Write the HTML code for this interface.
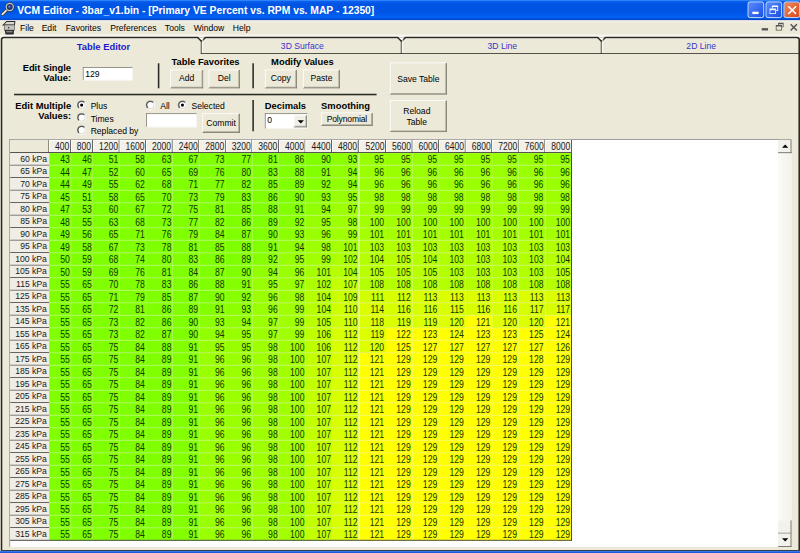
<!DOCTYPE html><html><head><meta charset="utf-8"><style>
*{margin:0;padding:0;box-sizing:border-box}
html,body{width:800px;height:553px;overflow:hidden;background:#ece9d8}
#w{position:absolute;left:0;top:0;width:1024px;height:708px;transform:scale(0.78125);transform-origin:0 0;background:#ece9d8;font-family:"Liberation Sans",sans-serif;font-size:11px;color:#000;overflow:hidden}
.a{position:absolute}
.t{position:absolute;white-space:nowrap;line-height:13px}
.b{font-weight:bold;font-size:12px}
.btn{position:absolute;background:#ece9d8;border-top:1px solid #fff;border-left:1px solid #fff;border-right:1px solid #716f64;border-bottom:1px solid #716f64;box-shadow:inset -1px -1px 0 #aca899;text-align:center}
.etchv{position:absolute;width:2px;background:#2b2b25}
.sb{position:absolute;background:#f2f1eb;border-right:1px solid #5a5a50;border-bottom:1px solid #5a5a50}
.cell{position:absolute;text-align:right;padding-right:1px;line-height:16px;height:16px}
.rh{font-size:12px;line-height:14.5px;color:#202020}
.rh span{display:inline-block;transform:scaleX(.92);transform-origin:100% 50%}
.ch{background:#f1efe6;border-right:1.2px solid #35352e;box-shadow:inset 1px 1px 0 #fff;font-size:13.5px;line-height:17px;color:#202020}
.ch span{display:inline-block;transform:scaleX(.81);transform-origin:100% 50%}
.d{font-size:13px;line-height:17.8px;color:#123600}
.d span{display:inline-block;transform:scaleX(.85);transform-origin:100% 50%}
</style></head><body><div id="w">
<div class="a" style="left:0;top:0;width:1024px;height:26px;background:linear-gradient(#3d95ff 0,#0a5eef 2px,#0054e3 5px,#0054e3 15px,#0062f5 22px,#0050e0 24px,#0040b8 26px)"></div>
<svg class="a" style="left:0;top:0" width="22" height="24" viewBox="0 0 22 24"><line x1="3" y1="18.5" x2="8.5" y2="13" stroke="#3a3a30" stroke-width="4" stroke-linecap="round"/><line x1="3" y1="18.5" x2="8.5" y2="13" stroke="#f0ecd8" stroke-width="2.2" stroke-linecap="round"/><circle cx="12.5" cy="9" r="5.6" fill="#23337a" stroke="#2a2a25" stroke-width="1"/><circle cx="12.5" cy="9" r="4.6" fill="none" stroke="#c8c8b8" stroke-width="1.6"/><circle cx="12" cy="8.5" r="1.5" fill="#5a7ad0"/></svg>
<div class="t b" style="left:22px;top:6px;color:#fff;font-size:13.2px;line-height:16px">VCM Editor - 3bar_v1.bin - [Primary VE Percent vs. RPM vs. MAP - 12350]</div>
<div class="a" style="left:957px;top:2px;width:21px;height:21px;border:1px solid #fff;border-radius:3px;background:linear-gradient(135deg,#5a8cff,#1a4fe0)"><div class="a" style="left:5px;top:12px;width:8px;height:3px;background:#fff"></div></div>
<div class="a" style="left:980px;top:2px;width:21px;height:21px;border:1px solid #fff;border-radius:3px;background:linear-gradient(135deg,#5a8cff,#1a4fe0)"><div class="a" style="left:7px;top:4px;width:8px;height:7px;border:1px solid #fff;border-top-width:2px"></div><div class="a" style="left:4px;top:8px;width:8px;height:7px;border:1px solid #fff;border-top-width:2px;background:#2a5ff0"></div></div>
<div class="a" style="left:1003px;top:2px;width:21px;height:21px;border:1px solid #fff;border-radius:3px;background:linear-gradient(135deg,#f08a5a,#d84a20)"><svg class="a" style="left:4px;top:4px" width="12" height="12"><path d="M1 1L11 11M11 1L1 11" stroke="#fff" stroke-width="2"/></svg></div>
<div class="a" style="left:0;top:26px;width:1024px;height:21px;background:linear-gradient(#f4f1ea,#ece9d8 4px,#ece9d8 17px,#fbfaf6 20px)"></div>
<svg class="a" style="left:0;top:26px" width="22" height="20" viewBox="0 0 22 20"><path d="M4 6L8.5 1.5H19L18.5 6Z" fill="#d8d8d0" stroke="#2a2a2a" stroke-width="1.3"/><rect x="5.5" y="6" width="13" height="6.5" fill="#c4c4c0" stroke="#555" stroke-width="0.8"/><circle cx="11" cy="9.5" r="0.9" fill="#222"/><path d="M6 12.5H18L17.5 18H7Z" fill="#2c2c2c"/><rect x="8" y="13.5" width="8" height="2" fill="#888"/></svg>
<div class="t" style="left:25.6px;top:29.5px">File</div>
<div class="t" style="left:53.3px;top:29.5px">Edit</div>
<div class="t" style="left:84.0px;top:29.5px">Favorites</div>
<div class="t" style="left:141.0px;top:29.5px">Preferences</div>
<div class="t" style="left:211.0px;top:29.5px">Tools</div>
<div class="t" style="left:248.0px;top:29.5px">Window</div>
<div class="t" style="left:298.0px;top:29.5px">Help</div>
<div class="a" style="left:975px;top:36px;width:8px;height:3px;background:#555"></div>
<div class="a" style="left:996px;top:29px;width:7px;height:6px;border:1px solid #555;border-top-width:2px"></div><div class="a" style="left:993px;top:32px;width:8px;height:7px;border:1px solid #555;border-top-width:2px;background:#ece9d8"></div>
<svg class="a" style="left:1011px;top:30px" width="10" height="10"><path d="M1 1L9 9M9 1L1 9" stroke="#555" stroke-width="2"/></svg>
<div class="a" style="left:1px;top:47px;width:1023px;height:659px;border:2px solid #2a2a22;border-radius:4px 4px 0 0;box-shadow:inset 1px 1px 0 #fff"></div>
<div class="t" style="left:4px;width:257px;text-align:center;top:54px;color:#1a1acc;font-weight:bold;font-size:12px">Table Editor</div>
<div class="a" style="left:257px;top:67.5px;width:257px;height:1.7px;background:#2a2a22"></div>
<div class="a" style="left:256.5px;top:49px;width:1.7px;height:20px;background:#2a2a22"></div>
<svg class="a" style="left:251.8px;top:45px" width="12" height="9"><rect x="2" y="0" width="8" height="3" fill="#f6f5f0"/><path d="M1 3L5.5 7.5L6.5 7.5L11 3" stroke="#2a2a22" stroke-width="1.7" fill="#fff"/></svg>
<div class="a" style="left:259px;top:49px;width:1px;height:18px;background:#fff"></div>
<div class="t" style="left:259px;width:256px;text-align:center;top:53px;color:#3434cc">3D Surface</div>
<div class="a" style="left:513px;top:67.5px;width:257px;height:1.7px;background:#2a2a22"></div>
<div class="a" style="left:512.5px;top:49px;width:1.7px;height:20px;background:#2a2a22"></div>
<svg class="a" style="left:507.8px;top:45px" width="12" height="9"><rect x="2" y="0" width="8" height="3" fill="#f6f5f0"/><path d="M1 3L5.5 7.5L6.5 7.5L11 3" stroke="#2a2a22" stroke-width="1.7" fill="#fff"/></svg>
<div class="a" style="left:515px;top:49px;width:1px;height:18px;background:#fff"></div>
<div class="t" style="left:515px;width:256px;text-align:center;top:53px;color:#3434cc">3D Line</div>
<div class="a" style="left:769px;top:67.5px;width:254px;height:1.7px;background:#2a2a22"></div>
<div class="a" style="left:768.5px;top:49px;width:1.7px;height:20px;background:#2a2a22"></div>
<svg class="a" style="left:763.8px;top:45px" width="12" height="9"><rect x="2" y="0" width="8" height="3" fill="#f6f5f0"/><path d="M1 3L5.5 7.5L6.5 7.5L11 3" stroke="#2a2a22" stroke-width="1.7" fill="#fff"/></svg>
<div class="a" style="left:771px;top:49px;width:1px;height:18px;background:#fff"></div>
<div class="t" style="left:771px;width:253px;text-align:center;top:53px;color:#3434cc">2D Line</div>
<div class="t b" style="right:933.0px;top:81.0px;text-align:right">Edit Single</div>
<div class="t b" style="right:933.0px;top:94.0px;text-align:right">Value:</div>
<div class="a" style="left:106px;top:85.5px;width:64px;height:17px;background:#fff;border-top:1.5px solid #7c7a6c;border-left:1.5px solid #7c7a6c;border-right:1px solid #f4f3ee;border-bottom:1px solid #f4f3ee"></div>
<div class="t" style="left:109.0px;top:89.0px">129</div>
<div class="etchv" style="left:202px;top:80.5px;height:32px"></div>
<div class="t b" style="left:219.5px;top:72.5px">Table Favorites</div>
<div class="btn" style="left:218px;top:89px;width:42px;height:24px;line-height:21px">Add</div>
<div class="btn" style="left:267px;top:89px;width:40px;height:24px;line-height:21px">Del</div>
<div class="etchv" style="left:322.5px;top:80.5px;height:32px"></div>
<div class="t b" style="left:347.0px;top:72.5px">Modify Values</div>
<div class="btn" style="left:339px;top:89px;width:41px;height:24px;line-height:21px">Copy</div>
<div class="btn" style="left:388px;top:89px;width:47px;height:24px;line-height:21px">Paste</div>
<div class="btn" style="left:499px;top:80px;width:73px;height:41px;line-height:40px">Save Table</div>
<div class="btn" style="left:499px;top:128px;width:73px;height:41px;line-height:13.6px;padding-top:7px;padding-right:4px">Reload<br>Table</div>
<div class="a" style="left:18px;top:119.5px;width:464px;height:2px;background:#2b2b25"></div>
<div class="t b" style="right:933.0px;top:129.0px;text-align:right">Edit Multiple</div>
<div class="t b" style="right:933.0px;top:142.0px;text-align:right">Values:</div>
<svg width="0" height="0" style="position:absolute"><defs><linearGradient id="rg" x1="0" y1="0" x2="1" y2="1"><stop offset=".45" stop-color="#808080"/><stop offset=".55" stop-color="#fff"/></linearGradient><linearGradient id="rg2" x1="0" y1="0" x2="1" y2="1"><stop offset=".45" stop-color="#404040"/><stop offset=".55" stop-color="#d4d0c8"/></linearGradient></defs></svg>
<svg class="a" style="left:98.2px;top:128.0px" width="13" height="13" viewBox="0 0 13 13"><circle cx="6.5" cy="6.5" r="6" fill="url(#rg)"/><circle cx="6.5" cy="6.5" r="5" fill="url(#rg2)"/><circle cx="6.5" cy="6.5" r="4" fill="#fff"/><circle cx="6.5" cy="6.5" r="2" fill="#000"/></svg>
<div class="t" style="left:116.0px;top:129.0px">Plus</div>
<svg class="a" style="left:98.2px;top:144.0px" width="13" height="13" viewBox="0 0 13 13"><circle cx="6.5" cy="6.5" r="6" fill="url(#rg)"/><circle cx="6.5" cy="6.5" r="5" fill="url(#rg2)"/><circle cx="6.5" cy="6.5" r="4" fill="#fff"/></svg>
<div class="t" style="left:116.0px;top:145.5px">Times</div>
<svg class="a" style="left:98.2px;top:160.0px" width="13" height="13" viewBox="0 0 13 13"><circle cx="6.5" cy="6.5" r="6" fill="url(#rg)"/><circle cx="6.5" cy="6.5" r="5" fill="url(#rg2)"/><circle cx="6.5" cy="6.5" r="4" fill="#fff"/></svg>
<div class="t" style="left:116.0px;top:161.5px">Replaced by</div>
<svg class="a" style="left:185.8px;top:128.0px" width="13" height="13" viewBox="0 0 13 13"><circle cx="6.5" cy="6.5" r="6" fill="url(#rg)"/><circle cx="6.5" cy="6.5" r="5" fill="url(#rg2)"/><circle cx="6.5" cy="6.5" r="4" fill="#fff"/></svg>
<div class="t" style="left:205.0px;top:129.0px">All</div>
<svg class="a" style="left:226.5px;top:128.0px" width="13" height="13" viewBox="0 0 13 13"><circle cx="6.5" cy="6.5" r="6" fill="url(#rg)"/><circle cx="6.5" cy="6.5" r="5" fill="url(#rg2)"/><circle cx="6.5" cy="6.5" r="4" fill="#fff"/><circle cx="6.5" cy="6.5" r="2" fill="#000"/></svg>
<div class="t" style="left:245.0px;top:129.0px">Selected</div>
<div class="a" style="left:187px;top:145px;width:65px;height:18px;background:#fff;border-top:1.5px solid #7c7a6c;border-left:1.5px solid #7c7a6c;border-right:1px solid #f4f3ee;border-bottom:1px solid #f4f3ee"></div>
<div class="btn" style="left:259px;top:145px;width:48px;height:25px;line-height:22px">Commit</div>
<div class="etchv" style="left:322.5px;top:128px;height:40px"></div>
<div class="t b" style="left:339.0px;top:129.5px">Decimals</div>
<div class="t b" style="left:411.0px;top:129.5px">Smoothing</div>
<div class="a" style="left:339px;top:145px;width:55px;height:20px;background:#fff;border-top:1.5px solid #7c7a6c;border-left:1.5px solid #7c7a6c;border-right:1px solid #f4f3ee;border-bottom:1px solid #f4f3ee"></div>
<div class="t" style="left:342.0px;top:148.0px">0</div>
<div class="btn" style="left:376px;top:147px;width:17px;height:16px;background:#f0efe8"><div class="a" style="left:3.5px;top:5.5px;width:0;height:0;border-left:4.5px solid transparent;border-right:4.5px solid transparent;border-top:4.5px solid #000"></div></div>
<div class="btn" style="left:411px;top:144px;width:66px;height:17px;line-height:14px;letter-spacing:-0.2px">Polynomial</div>
<div class="a" style="left:12px;top:178px;width:1001px;height:522px;background:#fff;border-top:1px solid #808080;border-left:1px solid #808080"></div>
<div class="a" style="left:13px;top:179px;width:50px;height:16px;background:#ece9d8;border-right:1px solid #45453c"></div>
<div class="cell ch" style="left:63.00px;top:179px;width:28.00px;"><span>400</span></div>
<div class="cell ch" style="left:91.00px;top:179px;width:28.00px;"><span>800</span></div>
<div class="cell ch" style="left:119.00px;top:179px;width:34.05px;"><span>1200</span></div>
<div class="cell ch" style="left:153.05px;top:179px;width:34.05px;"><span>1600</span></div>
<div class="cell ch" style="left:187.10px;top:179px;width:34.05px;"><span>2000</span></div>
<div class="cell ch" style="left:221.15px;top:179px;width:34.05px;"><span>2400</span></div>
<div class="cell ch" style="left:255.20px;top:179px;width:34.05px;"><span>2800</span></div>
<div class="cell ch" style="left:289.25px;top:179px;width:34.05px;"><span>3200</span></div>
<div class="cell ch" style="left:323.30px;top:179px;width:34.05px;"><span>3600</span></div>
<div class="cell ch" style="left:357.35px;top:179px;width:34.05px;"><span>4000</span></div>
<div class="cell ch" style="left:391.40px;top:179px;width:34.05px;"><span>4400</span></div>
<div class="cell ch" style="left:425.45px;top:179px;width:34.05px;"><span>4800</span></div>
<div class="cell ch" style="left:459.50px;top:179px;width:34.05px;"><span>5200</span></div>
<div class="cell ch" style="left:493.55px;top:179px;width:34.05px;"><span>5600</span></div>
<div class="cell ch" style="left:527.60px;top:179px;width:34.05px;"><span>6000</span></div>
<div class="cell ch" style="left:561.65px;top:179px;width:34.05px;"><span>6400</span></div>
<div class="cell ch" style="left:595.70px;top:179px;width:34.05px;"><span>6800</span></div>
<div class="cell ch" style="left:629.75px;top:179px;width:34.05px;"><span>7200</span></div>
<div class="cell ch" style="left:663.80px;top:179px;width:34.05px;"><span>7600</span></div>
<div class="cell ch" style="left:697.85px;top:179px;width:34.05px;"><span>8000</span></div>
<div class="a" style="left:13px;top:195px;width:718.90px;height:1px;background:#000"></div>
<div class="cell rh" style="left:13px;top:196px;width:50px;background:#efede5;border-bottom:1.28px solid #1e1e1e;padding-right:2.8px"><span>60 kPa</span></div>
<div class="cell d" style="left:63.00px;top:196px;width:28.00px;background:#80ff00;border-right:1px solid rgba(225,225,225,.28);border-bottom:1px solid rgba(230,230,230,.42)"><span>43</span></div>
<div class="cell d" style="left:91.00px;top:196px;width:28.00px;background:#80ff00;border-right:1px solid rgba(225,225,225,.28);border-bottom:1px solid rgba(230,230,230,.42)"><span>46</span></div>
<div class="cell d" style="left:119.00px;top:196px;width:34.05px;background:#80ff00;border-right:1px solid rgba(225,225,225,.28);border-bottom:1px solid rgba(230,230,230,.42)"><span>51</span></div>
<div class="cell d" style="left:153.05px;top:196px;width:34.05px;background:#80ff00;border-right:1px solid rgba(225,225,225,.28);border-bottom:1px solid rgba(230,230,230,.42)"><span>58</span></div>
<div class="cell d" style="left:187.10px;top:196px;width:34.05px;background:#80ff00;border-right:1px solid rgba(225,225,225,.28);border-bottom:1px solid rgba(230,230,230,.42)"><span>63</span></div>
<div class="cell d" style="left:221.15px;top:196px;width:34.05px;background:#80ff00;border-right:1px solid rgba(225,225,225,.28);border-bottom:1px solid rgba(230,230,230,.42)"><span>67</span></div>
<div class="cell d" style="left:255.20px;top:196px;width:34.05px;background:#80ff00;border-right:1px solid rgba(225,225,225,.28);border-bottom:1px solid rgba(230,230,230,.42)"><span>73</span></div>
<div class="cell d" style="left:289.25px;top:196px;width:34.05px;background:#80ff00;border-right:1px solid rgba(225,225,225,.28);border-bottom:1px solid rgba(230,230,230,.42)"><span>77</span></div>
<div class="cell d" style="left:323.30px;top:196px;width:34.05px;background:#80ff00;border-right:1px solid rgba(225,225,225,.28);border-bottom:1px solid rgba(230,230,230,.42)"><span>81</span></div>
<div class="cell d" style="left:357.35px;top:196px;width:34.05px;background:#80ff00;border-right:1px solid rgba(225,225,225,.28);border-bottom:1px solid rgba(230,230,230,.42)"><span>86</span></div>
<div class="cell d" style="left:391.40px;top:196px;width:34.05px;background:#80ff00;border-right:1px solid rgba(225,225,225,.28);border-bottom:1px solid rgba(230,230,230,.42)"><span>90</span></div>
<div class="cell d" style="left:425.45px;top:196px;width:34.05px;background:#8cff00;border-right:1px solid rgba(225,225,225,.28);border-bottom:1px solid rgba(230,230,230,.42)"><span>93</span></div>
<div class="cell d" style="left:459.50px;top:196px;width:34.05px;background:#98ff00;border-right:1px solid rgba(225,225,225,.28);border-bottom:1px solid rgba(230,230,230,.42)"><span>95</span></div>
<div class="cell d" style="left:493.55px;top:196px;width:34.05px;background:#98ff00;border-right:1px solid rgba(225,225,225,.28);border-bottom:1px solid rgba(230,230,230,.42)"><span>95</span></div>
<div class="cell d" style="left:527.60px;top:196px;width:34.05px;background:#98ff00;border-right:1px solid rgba(225,225,225,.28);border-bottom:1px solid rgba(230,230,230,.42)"><span>95</span></div>
<div class="cell d" style="left:561.65px;top:196px;width:34.05px;background:#98ff00;border-right:1px solid rgba(225,225,225,.28);border-bottom:1px solid rgba(230,230,230,.42)"><span>95</span></div>
<div class="cell d" style="left:595.70px;top:196px;width:34.05px;background:#98ff00;border-right:1px solid rgba(225,225,225,.28);border-bottom:1px solid rgba(230,230,230,.42)"><span>95</span></div>
<div class="cell d" style="left:629.75px;top:196px;width:34.05px;background:#98ff00;border-right:1px solid rgba(225,225,225,.28);border-bottom:1px solid rgba(230,230,230,.42)"><span>95</span></div>
<div class="cell d" style="left:663.80px;top:196px;width:34.05px;background:#98ff00;border-right:1px solid rgba(225,225,225,.28);border-bottom:1px solid rgba(230,230,230,.42)"><span>95</span></div>
<div class="cell d" style="left:697.85px;top:196px;width:34.05px;background:#98ff00;border-right:1px solid rgba(225,225,225,.28);border-bottom:1px solid rgba(230,230,230,.42)"><span>95</span></div>
<div class="cell rh" style="left:13px;top:212px;width:50px;background:#efede5;border-bottom:1.28px solid #1e1e1e;padding-right:2.8px"><span>65 kPa</span></div>
<div class="cell d" style="left:63.00px;top:212px;width:28.00px;background:#80ff00;border-right:1px solid rgba(225,225,225,.28);border-bottom:1px solid rgba(230,230,230,.42)"><span>44</span></div>
<div class="cell d" style="left:91.00px;top:212px;width:28.00px;background:#80ff00;border-right:1px solid rgba(225,225,225,.28);border-bottom:1px solid rgba(230,230,230,.42)"><span>47</span></div>
<div class="cell d" style="left:119.00px;top:212px;width:34.05px;background:#80ff00;border-right:1px solid rgba(225,225,225,.28);border-bottom:1px solid rgba(230,230,230,.42)"><span>52</span></div>
<div class="cell d" style="left:153.05px;top:212px;width:34.05px;background:#80ff00;border-right:1px solid rgba(225,225,225,.28);border-bottom:1px solid rgba(230,230,230,.42)"><span>60</span></div>
<div class="cell d" style="left:187.10px;top:212px;width:34.05px;background:#80ff00;border-right:1px solid rgba(225,225,225,.28);border-bottom:1px solid rgba(230,230,230,.42)"><span>65</span></div>
<div class="cell d" style="left:221.15px;top:212px;width:34.05px;background:#80ff00;border-right:1px solid rgba(225,225,225,.28);border-bottom:1px solid rgba(230,230,230,.42)"><span>69</span></div>
<div class="cell d" style="left:255.20px;top:212px;width:34.05px;background:#80ff00;border-right:1px solid rgba(225,225,225,.28);border-bottom:1px solid rgba(230,230,230,.42)"><span>76</span></div>
<div class="cell d" style="left:289.25px;top:212px;width:34.05px;background:#80ff00;border-right:1px solid rgba(225,225,225,.28);border-bottom:1px solid rgba(230,230,230,.42)"><span>80</span></div>
<div class="cell d" style="left:323.30px;top:212px;width:34.05px;background:#80ff00;border-right:1px solid rgba(225,225,225,.28);border-bottom:1px solid rgba(230,230,230,.42)"><span>83</span></div>
<div class="cell d" style="left:357.35px;top:212px;width:34.05px;background:#80ff00;border-right:1px solid rgba(225,225,225,.28);border-bottom:1px solid rgba(230,230,230,.42)"><span>88</span></div>
<div class="cell d" style="left:391.40px;top:212px;width:34.05px;background:#84ff00;border-right:1px solid rgba(225,225,225,.28);border-bottom:1px solid rgba(230,230,230,.42)"><span>91</span></div>
<div class="cell d" style="left:425.45px;top:212px;width:34.05px;background:#92ff00;border-right:1px solid rgba(225,225,225,.28);border-bottom:1px solid rgba(230,230,230,.42)"><span>94</span></div>
<div class="cell d" style="left:459.50px;top:212px;width:34.05px;background:#9aff00;border-right:1px solid rgba(225,225,225,.28);border-bottom:1px solid rgba(230,230,230,.42)"><span>96</span></div>
<div class="cell d" style="left:493.55px;top:212px;width:34.05px;background:#9aff00;border-right:1px solid rgba(225,225,225,.28);border-bottom:1px solid rgba(230,230,230,.42)"><span>96</span></div>
<div class="cell d" style="left:527.60px;top:212px;width:34.05px;background:#9aff00;border-right:1px solid rgba(225,225,225,.28);border-bottom:1px solid rgba(230,230,230,.42)"><span>96</span></div>
<div class="cell d" style="left:561.65px;top:212px;width:34.05px;background:#9aff00;border-right:1px solid rgba(225,225,225,.28);border-bottom:1px solid rgba(230,230,230,.42)"><span>96</span></div>
<div class="cell d" style="left:595.70px;top:212px;width:34.05px;background:#9aff00;border-right:1px solid rgba(225,225,225,.28);border-bottom:1px solid rgba(230,230,230,.42)"><span>96</span></div>
<div class="cell d" style="left:629.75px;top:212px;width:34.05px;background:#9aff00;border-right:1px solid rgba(225,225,225,.28);border-bottom:1px solid rgba(230,230,230,.42)"><span>96</span></div>
<div class="cell d" style="left:663.80px;top:212px;width:34.05px;background:#9aff00;border-right:1px solid rgba(225,225,225,.28);border-bottom:1px solid rgba(230,230,230,.42)"><span>96</span></div>
<div class="cell d" style="left:697.85px;top:212px;width:34.05px;background:#9aff00;border-right:1px solid rgba(225,225,225,.28);border-bottom:1px solid rgba(230,230,230,.42)"><span>96</span></div>
<div class="cell rh" style="left:13px;top:228px;width:50px;background:#efede5;border-bottom:1.28px solid #1e1e1e;padding-right:2.8px"><span>70 kPa</span></div>
<div class="cell d" style="left:63.00px;top:228px;width:28.00px;background:#80ff00;border-right:1px solid rgba(225,225,225,.28);border-bottom:1px solid rgba(230,230,230,.42)"><span>44</span></div>
<div class="cell d" style="left:91.00px;top:228px;width:28.00px;background:#80ff00;border-right:1px solid rgba(225,225,225,.28);border-bottom:1px solid rgba(230,230,230,.42)"><span>49</span></div>
<div class="cell d" style="left:119.00px;top:228px;width:34.05px;background:#80ff00;border-right:1px solid rgba(225,225,225,.28);border-bottom:1px solid rgba(230,230,230,.42)"><span>55</span></div>
<div class="cell d" style="left:153.05px;top:228px;width:34.05px;background:#80ff00;border-right:1px solid rgba(225,225,225,.28);border-bottom:1px solid rgba(230,230,230,.42)"><span>62</span></div>
<div class="cell d" style="left:187.10px;top:228px;width:34.05px;background:#80ff00;border-right:1px solid rgba(225,225,225,.28);border-bottom:1px solid rgba(230,230,230,.42)"><span>68</span></div>
<div class="cell d" style="left:221.15px;top:228px;width:34.05px;background:#80ff00;border-right:1px solid rgba(225,225,225,.28);border-bottom:1px solid rgba(230,230,230,.42)"><span>71</span></div>
<div class="cell d" style="left:255.20px;top:228px;width:34.05px;background:#80ff00;border-right:1px solid rgba(225,225,225,.28);border-bottom:1px solid rgba(230,230,230,.42)"><span>77</span></div>
<div class="cell d" style="left:289.25px;top:228px;width:34.05px;background:#80ff00;border-right:1px solid rgba(225,225,225,.28);border-bottom:1px solid rgba(230,230,230,.42)"><span>82</span></div>
<div class="cell d" style="left:323.30px;top:228px;width:34.05px;background:#80ff00;border-right:1px solid rgba(225,225,225,.28);border-bottom:1px solid rgba(230,230,230,.42)"><span>85</span></div>
<div class="cell d" style="left:357.35px;top:228px;width:34.05px;background:#80ff00;border-right:1px solid rgba(225,225,225,.28);border-bottom:1px solid rgba(230,230,230,.42)"><span>89</span></div>
<div class="cell d" style="left:391.40px;top:228px;width:34.05px;background:#88ff00;border-right:1px solid rgba(225,225,225,.28);border-bottom:1px solid rgba(230,230,230,.42)"><span>92</span></div>
<div class="cell d" style="left:425.45px;top:228px;width:34.05px;background:#92ff00;border-right:1px solid rgba(225,225,225,.28);border-bottom:1px solid rgba(230,230,230,.42)"><span>94</span></div>
<div class="cell d" style="left:459.50px;top:228px;width:34.05px;background:#9aff00;border-right:1px solid rgba(225,225,225,.28);border-bottom:1px solid rgba(230,230,230,.42)"><span>96</span></div>
<div class="cell d" style="left:493.55px;top:228px;width:34.05px;background:#9aff00;border-right:1px solid rgba(225,225,225,.28);border-bottom:1px solid rgba(230,230,230,.42)"><span>96</span></div>
<div class="cell d" style="left:527.60px;top:228px;width:34.05px;background:#9aff00;border-right:1px solid rgba(225,225,225,.28);border-bottom:1px solid rgba(230,230,230,.42)"><span>96</span></div>
<div class="cell d" style="left:561.65px;top:228px;width:34.05px;background:#9aff00;border-right:1px solid rgba(225,225,225,.28);border-bottom:1px solid rgba(230,230,230,.42)"><span>96</span></div>
<div class="cell d" style="left:595.70px;top:228px;width:34.05px;background:#9aff00;border-right:1px solid rgba(225,225,225,.28);border-bottom:1px solid rgba(230,230,230,.42)"><span>96</span></div>
<div class="cell d" style="left:629.75px;top:228px;width:34.05px;background:#9aff00;border-right:1px solid rgba(225,225,225,.28);border-bottom:1px solid rgba(230,230,230,.42)"><span>96</span></div>
<div class="cell d" style="left:663.80px;top:228px;width:34.05px;background:#9aff00;border-right:1px solid rgba(225,225,225,.28);border-bottom:1px solid rgba(230,230,230,.42)"><span>96</span></div>
<div class="cell d" style="left:697.85px;top:228px;width:34.05px;background:#9aff00;border-right:1px solid rgba(225,225,225,.28);border-bottom:1px solid rgba(230,230,230,.42)"><span>96</span></div>
<div class="cell rh" style="left:13px;top:244px;width:50px;background:#efede5;border-bottom:1.28px solid #1e1e1e;padding-right:2.8px"><span>75 kPa</span></div>
<div class="cell d" style="left:63.00px;top:244px;width:28.00px;background:#80ff00;border-right:1px solid rgba(225,225,225,.28);border-bottom:1px solid rgba(230,230,230,.42)"><span>45</span></div>
<div class="cell d" style="left:91.00px;top:244px;width:28.00px;background:#80ff00;border-right:1px solid rgba(225,225,225,.28);border-bottom:1px solid rgba(230,230,230,.42)"><span>51</span></div>
<div class="cell d" style="left:119.00px;top:244px;width:34.05px;background:#80ff00;border-right:1px solid rgba(225,225,225,.28);border-bottom:1px solid rgba(230,230,230,.42)"><span>58</span></div>
<div class="cell d" style="left:153.05px;top:244px;width:34.05px;background:#80ff00;border-right:1px solid rgba(225,225,225,.28);border-bottom:1px solid rgba(230,230,230,.42)"><span>65</span></div>
<div class="cell d" style="left:187.10px;top:244px;width:34.05px;background:#80ff00;border-right:1px solid rgba(225,225,225,.28);border-bottom:1px solid rgba(230,230,230,.42)"><span>70</span></div>
<div class="cell d" style="left:221.15px;top:244px;width:34.05px;background:#80ff00;border-right:1px solid rgba(225,225,225,.28);border-bottom:1px solid rgba(230,230,230,.42)"><span>73</span></div>
<div class="cell d" style="left:255.20px;top:244px;width:34.05px;background:#80ff00;border-right:1px solid rgba(225,225,225,.28);border-bottom:1px solid rgba(230,230,230,.42)"><span>79</span></div>
<div class="cell d" style="left:289.25px;top:244px;width:34.05px;background:#80ff00;border-right:1px solid rgba(225,225,225,.28);border-bottom:1px solid rgba(230,230,230,.42)"><span>83</span></div>
<div class="cell d" style="left:323.30px;top:244px;width:34.05px;background:#80ff00;border-right:1px solid rgba(225,225,225,.28);border-bottom:1px solid rgba(230,230,230,.42)"><span>86</span></div>
<div class="cell d" style="left:357.35px;top:244px;width:34.05px;background:#80ff00;border-right:1px solid rgba(225,225,225,.28);border-bottom:1px solid rgba(230,230,230,.42)"><span>90</span></div>
<div class="cell d" style="left:391.40px;top:244px;width:34.05px;background:#8cff00;border-right:1px solid rgba(225,225,225,.28);border-bottom:1px solid rgba(230,230,230,.42)"><span>93</span></div>
<div class="cell d" style="left:425.45px;top:244px;width:34.05px;background:#98ff00;border-right:1px solid rgba(225,225,225,.28);border-bottom:1px solid rgba(230,230,230,.42)"><span>95</span></div>
<div class="cell d" style="left:459.50px;top:244px;width:34.05px;background:#9eff00;border-right:1px solid rgba(225,225,225,.28);border-bottom:1px solid rgba(230,230,230,.42)"><span>98</span></div>
<div class="cell d" style="left:493.55px;top:244px;width:34.05px;background:#9eff00;border-right:1px solid rgba(225,225,225,.28);border-bottom:1px solid rgba(230,230,230,.42)"><span>98</span></div>
<div class="cell d" style="left:527.60px;top:244px;width:34.05px;background:#9eff00;border-right:1px solid rgba(225,225,225,.28);border-bottom:1px solid rgba(230,230,230,.42)"><span>98</span></div>
<div class="cell d" style="left:561.65px;top:244px;width:34.05px;background:#9eff00;border-right:1px solid rgba(225,225,225,.28);border-bottom:1px solid rgba(230,230,230,.42)"><span>98</span></div>
<div class="cell d" style="left:595.70px;top:244px;width:34.05px;background:#9eff00;border-right:1px solid rgba(225,225,225,.28);border-bottom:1px solid rgba(230,230,230,.42)"><span>98</span></div>
<div class="cell d" style="left:629.75px;top:244px;width:34.05px;background:#9eff00;border-right:1px solid rgba(225,225,225,.28);border-bottom:1px solid rgba(230,230,230,.42)"><span>98</span></div>
<div class="cell d" style="left:663.80px;top:244px;width:34.05px;background:#9eff00;border-right:1px solid rgba(225,225,225,.28);border-bottom:1px solid rgba(230,230,230,.42)"><span>98</span></div>
<div class="cell d" style="left:697.85px;top:244px;width:34.05px;background:#9eff00;border-right:1px solid rgba(225,225,225,.28);border-bottom:1px solid rgba(230,230,230,.42)"><span>98</span></div>
<div class="cell rh" style="left:13px;top:260px;width:50px;background:#efede5;border-bottom:1.28px solid #1e1e1e;padding-right:2.8px"><span>80 kPa</span></div>
<div class="cell d" style="left:63.00px;top:260px;width:28.00px;background:#80ff00;border-right:1px solid rgba(225,225,225,.28);border-bottom:1px solid rgba(230,230,230,.42)"><span>47</span></div>
<div class="cell d" style="left:91.00px;top:260px;width:28.00px;background:#80ff00;border-right:1px solid rgba(225,225,225,.28);border-bottom:1px solid rgba(230,230,230,.42)"><span>53</span></div>
<div class="cell d" style="left:119.00px;top:260px;width:34.05px;background:#80ff00;border-right:1px solid rgba(225,225,225,.28);border-bottom:1px solid rgba(230,230,230,.42)"><span>60</span></div>
<div class="cell d" style="left:153.05px;top:260px;width:34.05px;background:#80ff00;border-right:1px solid rgba(225,225,225,.28);border-bottom:1px solid rgba(230,230,230,.42)"><span>67</span></div>
<div class="cell d" style="left:187.10px;top:260px;width:34.05px;background:#80ff00;border-right:1px solid rgba(225,225,225,.28);border-bottom:1px solid rgba(230,230,230,.42)"><span>72</span></div>
<div class="cell d" style="left:221.15px;top:260px;width:34.05px;background:#80ff00;border-right:1px solid rgba(225,225,225,.28);border-bottom:1px solid rgba(230,230,230,.42)"><span>75</span></div>
<div class="cell d" style="left:255.20px;top:260px;width:34.05px;background:#80ff00;border-right:1px solid rgba(225,225,225,.28);border-bottom:1px solid rgba(230,230,230,.42)"><span>81</span></div>
<div class="cell d" style="left:289.25px;top:260px;width:34.05px;background:#80ff00;border-right:1px solid rgba(225,225,225,.28);border-bottom:1px solid rgba(230,230,230,.42)"><span>85</span></div>
<div class="cell d" style="left:323.30px;top:260px;width:34.05px;background:#80ff00;border-right:1px solid rgba(225,225,225,.28);border-bottom:1px solid rgba(230,230,230,.42)"><span>88</span></div>
<div class="cell d" style="left:357.35px;top:260px;width:34.05px;background:#84ff00;border-right:1px solid rgba(225,225,225,.28);border-bottom:1px solid rgba(230,230,230,.42)"><span>91</span></div>
<div class="cell d" style="left:391.40px;top:260px;width:34.05px;background:#92ff00;border-right:1px solid rgba(225,225,225,.28);border-bottom:1px solid rgba(230,230,230,.42)"><span>94</span></div>
<div class="cell d" style="left:425.45px;top:260px;width:34.05px;background:#9cff00;border-right:1px solid rgba(225,225,225,.28);border-bottom:1px solid rgba(230,230,230,.42)"><span>97</span></div>
<div class="cell d" style="left:459.50px;top:260px;width:34.05px;background:#a0ff00;border-right:1px solid rgba(225,225,225,.28);border-bottom:1px solid rgba(230,230,230,.42)"><span>99</span></div>
<div class="cell d" style="left:493.55px;top:260px;width:34.05px;background:#a0ff00;border-right:1px solid rgba(225,225,225,.28);border-bottom:1px solid rgba(230,230,230,.42)"><span>99</span></div>
<div class="cell d" style="left:527.60px;top:260px;width:34.05px;background:#a0ff00;border-right:1px solid rgba(225,225,225,.28);border-bottom:1px solid rgba(230,230,230,.42)"><span>99</span></div>
<div class="cell d" style="left:561.65px;top:260px;width:34.05px;background:#a0ff00;border-right:1px solid rgba(225,225,225,.28);border-bottom:1px solid rgba(230,230,230,.42)"><span>99</span></div>
<div class="cell d" style="left:595.70px;top:260px;width:34.05px;background:#a0ff00;border-right:1px solid rgba(225,225,225,.28);border-bottom:1px solid rgba(230,230,230,.42)"><span>99</span></div>
<div class="cell d" style="left:629.75px;top:260px;width:34.05px;background:#a0ff00;border-right:1px solid rgba(225,225,225,.28);border-bottom:1px solid rgba(230,230,230,.42)"><span>99</span></div>
<div class="cell d" style="left:663.80px;top:260px;width:34.05px;background:#a0ff00;border-right:1px solid rgba(225,225,225,.28);border-bottom:1px solid rgba(230,230,230,.42)"><span>99</span></div>
<div class="cell d" style="left:697.85px;top:260px;width:34.05px;background:#a0ff00;border-right:1px solid rgba(225,225,225,.28);border-bottom:1px solid rgba(230,230,230,.42)"><span>99</span></div>
<div class="cell rh" style="left:13px;top:276px;width:50px;background:#efede5;border-bottom:1.28px solid #1e1e1e;padding-right:2.8px"><span>85 kPa</span></div>
<div class="cell d" style="left:63.00px;top:276px;width:28.00px;background:#80ff00;border-right:1px solid rgba(225,225,225,.28);border-bottom:1px solid rgba(230,230,230,.42)"><span>48</span></div>
<div class="cell d" style="left:91.00px;top:276px;width:28.00px;background:#80ff00;border-right:1px solid rgba(225,225,225,.28);border-bottom:1px solid rgba(230,230,230,.42)"><span>55</span></div>
<div class="cell d" style="left:119.00px;top:276px;width:34.05px;background:#80ff00;border-right:1px solid rgba(225,225,225,.28);border-bottom:1px solid rgba(230,230,230,.42)"><span>63</span></div>
<div class="cell d" style="left:153.05px;top:276px;width:34.05px;background:#80ff00;border-right:1px solid rgba(225,225,225,.28);border-bottom:1px solid rgba(230,230,230,.42)"><span>68</span></div>
<div class="cell d" style="left:187.10px;top:276px;width:34.05px;background:#80ff00;border-right:1px solid rgba(225,225,225,.28);border-bottom:1px solid rgba(230,230,230,.42)"><span>73</span></div>
<div class="cell d" style="left:221.15px;top:276px;width:34.05px;background:#80ff00;border-right:1px solid rgba(225,225,225,.28);border-bottom:1px solid rgba(230,230,230,.42)"><span>77</span></div>
<div class="cell d" style="left:255.20px;top:276px;width:34.05px;background:#80ff00;border-right:1px solid rgba(225,225,225,.28);border-bottom:1px solid rgba(230,230,230,.42)"><span>82</span></div>
<div class="cell d" style="left:289.25px;top:276px;width:34.05px;background:#80ff00;border-right:1px solid rgba(225,225,225,.28);border-bottom:1px solid rgba(230,230,230,.42)"><span>86</span></div>
<div class="cell d" style="left:323.30px;top:276px;width:34.05px;background:#80ff00;border-right:1px solid rgba(225,225,225,.28);border-bottom:1px solid rgba(230,230,230,.42)"><span>89</span></div>
<div class="cell d" style="left:357.35px;top:276px;width:34.05px;background:#88ff00;border-right:1px solid rgba(225,225,225,.28);border-bottom:1px solid rgba(230,230,230,.42)"><span>92</span></div>
<div class="cell d" style="left:391.40px;top:276px;width:34.05px;background:#98ff00;border-right:1px solid rgba(225,225,225,.28);border-bottom:1px solid rgba(230,230,230,.42)"><span>95</span></div>
<div class="cell d" style="left:425.45px;top:276px;width:34.05px;background:#9eff00;border-right:1px solid rgba(225,225,225,.28);border-bottom:1px solid rgba(230,230,230,.42)"><span>98</span></div>
<div class="cell d" style="left:459.50px;top:276px;width:34.05px;background:#a2ff00;border-right:1px solid rgba(225,225,225,.28);border-bottom:1px solid rgba(230,230,230,.42)"><span>100</span></div>
<div class="cell d" style="left:493.55px;top:276px;width:34.05px;background:#a2ff00;border-right:1px solid rgba(225,225,225,.28);border-bottom:1px solid rgba(230,230,230,.42)"><span>100</span></div>
<div class="cell d" style="left:527.60px;top:276px;width:34.05px;background:#a2ff00;border-right:1px solid rgba(225,225,225,.28);border-bottom:1px solid rgba(230,230,230,.42)"><span>100</span></div>
<div class="cell d" style="left:561.65px;top:276px;width:34.05px;background:#a2ff00;border-right:1px solid rgba(225,225,225,.28);border-bottom:1px solid rgba(230,230,230,.42)"><span>100</span></div>
<div class="cell d" style="left:595.70px;top:276px;width:34.05px;background:#a2ff00;border-right:1px solid rgba(225,225,225,.28);border-bottom:1px solid rgba(230,230,230,.42)"><span>100</span></div>
<div class="cell d" style="left:629.75px;top:276px;width:34.05px;background:#a2ff00;border-right:1px solid rgba(225,225,225,.28);border-bottom:1px solid rgba(230,230,230,.42)"><span>100</span></div>
<div class="cell d" style="left:663.80px;top:276px;width:34.05px;background:#a2ff00;border-right:1px solid rgba(225,225,225,.28);border-bottom:1px solid rgba(230,230,230,.42)"><span>100</span></div>
<div class="cell d" style="left:697.85px;top:276px;width:34.05px;background:#a2ff00;border-right:1px solid rgba(225,225,225,.28);border-bottom:1px solid rgba(230,230,230,.42)"><span>100</span></div>
<div class="cell rh" style="left:13px;top:292px;width:50px;background:#efede5;border-bottom:1.28px solid #1e1e1e;padding-right:2.8px"><span>90 kPa</span></div>
<div class="cell d" style="left:63.00px;top:292px;width:28.00px;background:#80ff00;border-right:1px solid rgba(225,225,225,.28);border-bottom:1px solid rgba(230,230,230,.42)"><span>49</span></div>
<div class="cell d" style="left:91.00px;top:292px;width:28.00px;background:#80ff00;border-right:1px solid rgba(225,225,225,.28);border-bottom:1px solid rgba(230,230,230,.42)"><span>56</span></div>
<div class="cell d" style="left:119.00px;top:292px;width:34.05px;background:#80ff00;border-right:1px solid rgba(225,225,225,.28);border-bottom:1px solid rgba(230,230,230,.42)"><span>65</span></div>
<div class="cell d" style="left:153.05px;top:292px;width:34.05px;background:#80ff00;border-right:1px solid rgba(225,225,225,.28);border-bottom:1px solid rgba(230,230,230,.42)"><span>71</span></div>
<div class="cell d" style="left:187.10px;top:292px;width:34.05px;background:#80ff00;border-right:1px solid rgba(225,225,225,.28);border-bottom:1px solid rgba(230,230,230,.42)"><span>76</span></div>
<div class="cell d" style="left:221.15px;top:292px;width:34.05px;background:#80ff00;border-right:1px solid rgba(225,225,225,.28);border-bottom:1px solid rgba(230,230,230,.42)"><span>79</span></div>
<div class="cell d" style="left:255.20px;top:292px;width:34.05px;background:#80ff00;border-right:1px solid rgba(225,225,225,.28);border-bottom:1px solid rgba(230,230,230,.42)"><span>84</span></div>
<div class="cell d" style="left:289.25px;top:292px;width:34.05px;background:#80ff00;border-right:1px solid rgba(225,225,225,.28);border-bottom:1px solid rgba(230,230,230,.42)"><span>87</span></div>
<div class="cell d" style="left:323.30px;top:292px;width:34.05px;background:#80ff00;border-right:1px solid rgba(225,225,225,.28);border-bottom:1px solid rgba(230,230,230,.42)"><span>90</span></div>
<div class="cell d" style="left:357.35px;top:292px;width:34.05px;background:#8cff00;border-right:1px solid rgba(225,225,225,.28);border-bottom:1px solid rgba(230,230,230,.42)"><span>93</span></div>
<div class="cell d" style="left:391.40px;top:292px;width:34.05px;background:#9aff00;border-right:1px solid rgba(225,225,225,.28);border-bottom:1px solid rgba(230,230,230,.42)"><span>96</span></div>
<div class="cell d" style="left:425.45px;top:292px;width:34.05px;background:#a0ff00;border-right:1px solid rgba(225,225,225,.28);border-bottom:1px solid rgba(230,230,230,.42)"><span>99</span></div>
<div class="cell d" style="left:459.50px;top:292px;width:34.05px;background:#a5ff00;border-right:1px solid rgba(225,225,225,.28);border-bottom:1px solid rgba(230,230,230,.42)"><span>101</span></div>
<div class="cell d" style="left:493.55px;top:292px;width:34.05px;background:#a5ff00;border-right:1px solid rgba(225,225,225,.28);border-bottom:1px solid rgba(230,230,230,.42)"><span>101</span></div>
<div class="cell d" style="left:527.60px;top:292px;width:34.05px;background:#a5ff00;border-right:1px solid rgba(225,225,225,.28);border-bottom:1px solid rgba(230,230,230,.42)"><span>101</span></div>
<div class="cell d" style="left:561.65px;top:292px;width:34.05px;background:#a5ff00;border-right:1px solid rgba(225,225,225,.28);border-bottom:1px solid rgba(230,230,230,.42)"><span>101</span></div>
<div class="cell d" style="left:595.70px;top:292px;width:34.05px;background:#a5ff00;border-right:1px solid rgba(225,225,225,.28);border-bottom:1px solid rgba(230,230,230,.42)"><span>101</span></div>
<div class="cell d" style="left:629.75px;top:292px;width:34.05px;background:#a5ff00;border-right:1px solid rgba(225,225,225,.28);border-bottom:1px solid rgba(230,230,230,.42)"><span>101</span></div>
<div class="cell d" style="left:663.80px;top:292px;width:34.05px;background:#a5ff00;border-right:1px solid rgba(225,225,225,.28);border-bottom:1px solid rgba(230,230,230,.42)"><span>101</span></div>
<div class="cell d" style="left:697.85px;top:292px;width:34.05px;background:#a5ff00;border-right:1px solid rgba(225,225,225,.28);border-bottom:1px solid rgba(230,230,230,.42)"><span>101</span></div>
<div class="cell rh" style="left:13px;top:308px;width:50px;background:#efede5;border-bottom:1.28px solid #1e1e1e;padding-right:2.8px"><span>95 kPa</span></div>
<div class="cell d" style="left:63.00px;top:308px;width:28.00px;background:#80ff00;border-right:1px solid rgba(225,225,225,.28);border-bottom:1px solid rgba(230,230,230,.42)"><span>49</span></div>
<div class="cell d" style="left:91.00px;top:308px;width:28.00px;background:#80ff00;border-right:1px solid rgba(225,225,225,.28);border-bottom:1px solid rgba(230,230,230,.42)"><span>58</span></div>
<div class="cell d" style="left:119.00px;top:308px;width:34.05px;background:#80ff00;border-right:1px solid rgba(225,225,225,.28);border-bottom:1px solid rgba(230,230,230,.42)"><span>67</span></div>
<div class="cell d" style="left:153.05px;top:308px;width:34.05px;background:#80ff00;border-right:1px solid rgba(225,225,225,.28);border-bottom:1px solid rgba(230,230,230,.42)"><span>73</span></div>
<div class="cell d" style="left:187.10px;top:308px;width:34.05px;background:#80ff00;border-right:1px solid rgba(225,225,225,.28);border-bottom:1px solid rgba(230,230,230,.42)"><span>78</span></div>
<div class="cell d" style="left:221.15px;top:308px;width:34.05px;background:#80ff00;border-right:1px solid rgba(225,225,225,.28);border-bottom:1px solid rgba(230,230,230,.42)"><span>81</span></div>
<div class="cell d" style="left:255.20px;top:308px;width:34.05px;background:#80ff00;border-right:1px solid rgba(225,225,225,.28);border-bottom:1px solid rgba(230,230,230,.42)"><span>85</span></div>
<div class="cell d" style="left:289.25px;top:308px;width:34.05px;background:#80ff00;border-right:1px solid rgba(225,225,225,.28);border-bottom:1px solid rgba(230,230,230,.42)"><span>88</span></div>
<div class="cell d" style="left:323.30px;top:308px;width:34.05px;background:#84ff00;border-right:1px solid rgba(225,225,225,.28);border-bottom:1px solid rgba(230,230,230,.42)"><span>91</span></div>
<div class="cell d" style="left:357.35px;top:308px;width:34.05px;background:#92ff00;border-right:1px solid rgba(225,225,225,.28);border-bottom:1px solid rgba(230,230,230,.42)"><span>94</span></div>
<div class="cell d" style="left:391.40px;top:308px;width:34.05px;background:#9eff00;border-right:1px solid rgba(225,225,225,.28);border-bottom:1px solid rgba(230,230,230,.42)"><span>98</span></div>
<div class="cell d" style="left:425.45px;top:308px;width:34.05px;background:#a5ff00;border-right:1px solid rgba(225,225,225,.28);border-bottom:1px solid rgba(230,230,230,.42)"><span>101</span></div>
<div class="cell d" style="left:459.50px;top:308px;width:34.05px;background:#b2ff00;border-right:1px solid rgba(225,225,225,.28);border-bottom:1px solid rgba(230,230,230,.42)"><span>103</span></div>
<div class="cell d" style="left:493.55px;top:308px;width:34.05px;background:#b2ff00;border-right:1px solid rgba(225,225,225,.28);border-bottom:1px solid rgba(230,230,230,.42)"><span>103</span></div>
<div class="cell d" style="left:527.60px;top:308px;width:34.05px;background:#b2ff00;border-right:1px solid rgba(225,225,225,.28);border-bottom:1px solid rgba(230,230,230,.42)"><span>103</span></div>
<div class="cell d" style="left:561.65px;top:308px;width:34.05px;background:#b2ff00;border-right:1px solid rgba(225,225,225,.28);border-bottom:1px solid rgba(230,230,230,.42)"><span>103</span></div>
<div class="cell d" style="left:595.70px;top:308px;width:34.05px;background:#b2ff00;border-right:1px solid rgba(225,225,225,.28);border-bottom:1px solid rgba(230,230,230,.42)"><span>103</span></div>
<div class="cell d" style="left:629.75px;top:308px;width:34.05px;background:#b2ff00;border-right:1px solid rgba(225,225,225,.28);border-bottom:1px solid rgba(230,230,230,.42)"><span>103</span></div>
<div class="cell d" style="left:663.80px;top:308px;width:34.05px;background:#b2ff00;border-right:1px solid rgba(225,225,225,.28);border-bottom:1px solid rgba(230,230,230,.42)"><span>103</span></div>
<div class="cell d" style="left:697.85px;top:308px;width:34.05px;background:#b2ff00;border-right:1px solid rgba(225,225,225,.28);border-bottom:1px solid rgba(230,230,230,.42)"><span>103</span></div>
<div class="cell rh" style="left:13px;top:324px;width:50px;background:#efede5;border-bottom:1.28px solid #1e1e1e;padding-right:2.8px"><span>100 kPa</span></div>
<div class="cell d" style="left:63.00px;top:324px;width:28.00px;background:#80ff00;border-right:1px solid rgba(225,225,225,.28);border-bottom:1px solid rgba(230,230,230,.42)"><span>50</span></div>
<div class="cell d" style="left:91.00px;top:324px;width:28.00px;background:#80ff00;border-right:1px solid rgba(225,225,225,.28);border-bottom:1px solid rgba(230,230,230,.42)"><span>59</span></div>
<div class="cell d" style="left:119.00px;top:324px;width:34.05px;background:#80ff00;border-right:1px solid rgba(225,225,225,.28);border-bottom:1px solid rgba(230,230,230,.42)"><span>68</span></div>
<div class="cell d" style="left:153.05px;top:324px;width:34.05px;background:#80ff00;border-right:1px solid rgba(225,225,225,.28);border-bottom:1px solid rgba(230,230,230,.42)"><span>74</span></div>
<div class="cell d" style="left:187.10px;top:324px;width:34.05px;background:#80ff00;border-right:1px solid rgba(225,225,225,.28);border-bottom:1px solid rgba(230,230,230,.42)"><span>80</span></div>
<div class="cell d" style="left:221.15px;top:324px;width:34.05px;background:#80ff00;border-right:1px solid rgba(225,225,225,.28);border-bottom:1px solid rgba(230,230,230,.42)"><span>83</span></div>
<div class="cell d" style="left:255.20px;top:324px;width:34.05px;background:#80ff00;border-right:1px solid rgba(225,225,225,.28);border-bottom:1px solid rgba(230,230,230,.42)"><span>86</span></div>
<div class="cell d" style="left:289.25px;top:324px;width:34.05px;background:#80ff00;border-right:1px solid rgba(225,225,225,.28);border-bottom:1px solid rgba(230,230,230,.42)"><span>89</span></div>
<div class="cell d" style="left:323.30px;top:324px;width:34.05px;background:#88ff00;border-right:1px solid rgba(225,225,225,.28);border-bottom:1px solid rgba(230,230,230,.42)"><span>92</span></div>
<div class="cell d" style="left:357.35px;top:324px;width:34.05px;background:#98ff00;border-right:1px solid rgba(225,225,225,.28);border-bottom:1px solid rgba(230,230,230,.42)"><span>95</span></div>
<div class="cell d" style="left:391.40px;top:324px;width:34.05px;background:#a0ff00;border-right:1px solid rgba(225,225,225,.28);border-bottom:1px solid rgba(230,230,230,.42)"><span>99</span></div>
<div class="cell d" style="left:425.45px;top:324px;width:34.05px;background:#acff00;border-right:1px solid rgba(225,225,225,.28);border-bottom:1px solid rgba(230,230,230,.42)"><span>102</span></div>
<div class="cell d" style="left:459.50px;top:324px;width:34.05px;background:#b6ff00;border-right:1px solid rgba(225,225,225,.28);border-bottom:1px solid rgba(230,230,230,.42)"><span>104</span></div>
<div class="cell d" style="left:493.55px;top:324px;width:34.05px;background:#baff00;border-right:1px solid rgba(225,225,225,.28);border-bottom:1px solid rgba(230,230,230,.42)"><span>105</span></div>
<div class="cell d" style="left:527.60px;top:324px;width:34.05px;background:#b6ff00;border-right:1px solid rgba(225,225,225,.28);border-bottom:1px solid rgba(230,230,230,.42)"><span>104</span></div>
<div class="cell d" style="left:561.65px;top:324px;width:34.05px;background:#b2ff00;border-right:1px solid rgba(225,225,225,.28);border-bottom:1px solid rgba(230,230,230,.42)"><span>103</span></div>
<div class="cell d" style="left:595.70px;top:324px;width:34.05px;background:#b2ff00;border-right:1px solid rgba(225,225,225,.28);border-bottom:1px solid rgba(230,230,230,.42)"><span>103</span></div>
<div class="cell d" style="left:629.75px;top:324px;width:34.05px;background:#b2ff00;border-right:1px solid rgba(225,225,225,.28);border-bottom:1px solid rgba(230,230,230,.42)"><span>103</span></div>
<div class="cell d" style="left:663.80px;top:324px;width:34.05px;background:#b2ff00;border-right:1px solid rgba(225,225,225,.28);border-bottom:1px solid rgba(230,230,230,.42)"><span>103</span></div>
<div class="cell d" style="left:697.85px;top:324px;width:34.05px;background:#b6ff00;border-right:1px solid rgba(225,225,225,.28);border-bottom:1px solid rgba(230,230,230,.42)"><span>104</span></div>
<div class="cell rh" style="left:13px;top:340px;width:50px;background:#efede5;border-bottom:1.28px solid #1e1e1e;padding-right:2.8px"><span>105 kPa</span></div>
<div class="cell d" style="left:63.00px;top:340px;width:28.00px;background:#80ff00;border-right:1px solid rgba(225,225,225,.28);border-bottom:1px solid rgba(230,230,230,.42)"><span>50</span></div>
<div class="cell d" style="left:91.00px;top:340px;width:28.00px;background:#80ff00;border-right:1px solid rgba(225,225,225,.28);border-bottom:1px solid rgba(230,230,230,.42)"><span>59</span></div>
<div class="cell d" style="left:119.00px;top:340px;width:34.05px;background:#80ff00;border-right:1px solid rgba(225,225,225,.28);border-bottom:1px solid rgba(230,230,230,.42)"><span>69</span></div>
<div class="cell d" style="left:153.05px;top:340px;width:34.05px;background:#80ff00;border-right:1px solid rgba(225,225,225,.28);border-bottom:1px solid rgba(230,230,230,.42)"><span>76</span></div>
<div class="cell d" style="left:187.10px;top:340px;width:34.05px;background:#80ff00;border-right:1px solid rgba(225,225,225,.28);border-bottom:1px solid rgba(230,230,230,.42)"><span>81</span></div>
<div class="cell d" style="left:221.15px;top:340px;width:34.05px;background:#80ff00;border-right:1px solid rgba(225,225,225,.28);border-bottom:1px solid rgba(230,230,230,.42)"><span>84</span></div>
<div class="cell d" style="left:255.20px;top:340px;width:34.05px;background:#80ff00;border-right:1px solid rgba(225,225,225,.28);border-bottom:1px solid rgba(230,230,230,.42)"><span>87</span></div>
<div class="cell d" style="left:289.25px;top:340px;width:34.05px;background:#80ff00;border-right:1px solid rgba(225,225,225,.28);border-bottom:1px solid rgba(230,230,230,.42)"><span>90</span></div>
<div class="cell d" style="left:323.30px;top:340px;width:34.05px;background:#92ff00;border-right:1px solid rgba(225,225,225,.28);border-bottom:1px solid rgba(230,230,230,.42)"><span>94</span></div>
<div class="cell d" style="left:357.35px;top:340px;width:34.05px;background:#9aff00;border-right:1px solid rgba(225,225,225,.28);border-bottom:1px solid rgba(230,230,230,.42)"><span>96</span></div>
<div class="cell d" style="left:391.40px;top:340px;width:34.05px;background:#a5ff00;border-right:1px solid rgba(225,225,225,.28);border-bottom:1px solid rgba(230,230,230,.42)"><span>101</span></div>
<div class="cell d" style="left:425.45px;top:340px;width:34.05px;background:#b6ff00;border-right:1px solid rgba(225,225,225,.28);border-bottom:1px solid rgba(230,230,230,.42)"><span>104</span></div>
<div class="cell d" style="left:459.50px;top:340px;width:34.05px;background:#baff00;border-right:1px solid rgba(225,225,225,.28);border-bottom:1px solid rgba(230,230,230,.42)"><span>105</span></div>
<div class="cell d" style="left:493.55px;top:340px;width:34.05px;background:#baff00;border-right:1px solid rgba(225,225,225,.28);border-bottom:1px solid rgba(230,230,230,.42)"><span>105</span></div>
<div class="cell d" style="left:527.60px;top:340px;width:34.05px;background:#baff00;border-right:1px solid rgba(225,225,225,.28);border-bottom:1px solid rgba(230,230,230,.42)"><span>105</span></div>
<div class="cell d" style="left:561.65px;top:340px;width:34.05px;background:#b2ff00;border-right:1px solid rgba(225,225,225,.28);border-bottom:1px solid rgba(230,230,230,.42)"><span>103</span></div>
<div class="cell d" style="left:595.70px;top:340px;width:34.05px;background:#b2ff00;border-right:1px solid rgba(225,225,225,.28);border-bottom:1px solid rgba(230,230,230,.42)"><span>103</span></div>
<div class="cell d" style="left:629.75px;top:340px;width:34.05px;background:#b2ff00;border-right:1px solid rgba(225,225,225,.28);border-bottom:1px solid rgba(230,230,230,.42)"><span>103</span></div>
<div class="cell d" style="left:663.80px;top:340px;width:34.05px;background:#b2ff00;border-right:1px solid rgba(225,225,225,.28);border-bottom:1px solid rgba(230,230,230,.42)"><span>103</span></div>
<div class="cell d" style="left:697.85px;top:340px;width:34.05px;background:#baff00;border-right:1px solid rgba(225,225,225,.28);border-bottom:1px solid rgba(230,230,230,.42)"><span>105</span></div>
<div class="cell rh" style="left:13px;top:356px;width:50px;background:#efede5;border-bottom:1.28px solid #1e1e1e;padding-right:2.8px"><span>115 kPa</span></div>
<div class="cell d" style="left:63.00px;top:356px;width:28.00px;background:#80ff00;border-right:1px solid rgba(225,225,225,.28);border-bottom:1px solid rgba(230,230,230,.42)"><span>55</span></div>
<div class="cell d" style="left:91.00px;top:356px;width:28.00px;background:#80ff00;border-right:1px solid rgba(225,225,225,.28);border-bottom:1px solid rgba(230,230,230,.42)"><span>65</span></div>
<div class="cell d" style="left:119.00px;top:356px;width:34.05px;background:#80ff00;border-right:1px solid rgba(225,225,225,.28);border-bottom:1px solid rgba(230,230,230,.42)"><span>70</span></div>
<div class="cell d" style="left:153.05px;top:356px;width:34.05px;background:#80ff00;border-right:1px solid rgba(225,225,225,.28);border-bottom:1px solid rgba(230,230,230,.42)"><span>78</span></div>
<div class="cell d" style="left:187.10px;top:356px;width:34.05px;background:#80ff00;border-right:1px solid rgba(225,225,225,.28);border-bottom:1px solid rgba(230,230,230,.42)"><span>83</span></div>
<div class="cell d" style="left:221.15px;top:356px;width:34.05px;background:#80ff00;border-right:1px solid rgba(225,225,225,.28);border-bottom:1px solid rgba(230,230,230,.42)"><span>86</span></div>
<div class="cell d" style="left:255.20px;top:356px;width:34.05px;background:#80ff00;border-right:1px solid rgba(225,225,225,.28);border-bottom:1px solid rgba(230,230,230,.42)"><span>88</span></div>
<div class="cell d" style="left:289.25px;top:356px;width:34.05px;background:#84ff00;border-right:1px solid rgba(225,225,225,.28);border-bottom:1px solid rgba(230,230,230,.42)"><span>91</span></div>
<div class="cell d" style="left:323.30px;top:356px;width:34.05px;background:#98ff00;border-right:1px solid rgba(225,225,225,.28);border-bottom:1px solid rgba(230,230,230,.42)"><span>95</span></div>
<div class="cell d" style="left:357.35px;top:356px;width:34.05px;background:#9cff00;border-right:1px solid rgba(225,225,225,.28);border-bottom:1px solid rgba(230,230,230,.42)"><span>97</span></div>
<div class="cell d" style="left:391.40px;top:356px;width:34.05px;background:#acff00;border-right:1px solid rgba(225,225,225,.28);border-bottom:1px solid rgba(230,230,230,.42)"><span>102</span></div>
<div class="cell d" style="left:425.45px;top:356px;width:34.05px;background:#c2ff00;border-right:1px solid rgba(225,225,225,.28);border-bottom:1px solid rgba(230,230,230,.42)"><span>107</span></div>
<div class="cell d" style="left:459.50px;top:356px;width:34.05px;background:#b4ff00;border-right:1px solid rgba(225,225,225,.28);border-bottom:1px solid rgba(230,230,230,.42)"><span>108</span></div>
<div class="cell d" style="left:493.55px;top:356px;width:34.05px;background:#b4ff00;border-right:1px solid rgba(225,225,225,.28);border-bottom:1px solid rgba(230,230,230,.42)"><span>108</span></div>
<div class="cell d" style="left:527.60px;top:356px;width:34.05px;background:#b4ff00;border-right:1px solid rgba(225,225,225,.28);border-bottom:1px solid rgba(230,230,230,.42)"><span>108</span></div>
<div class="cell d" style="left:561.65px;top:356px;width:34.05px;background:#b4ff00;border-right:1px solid rgba(225,225,225,.28);border-bottom:1px solid rgba(230,230,230,.42)"><span>108</span></div>
<div class="cell d" style="left:595.70px;top:356px;width:34.05px;background:#b4ff00;border-right:1px solid rgba(225,225,225,.28);border-bottom:1px solid rgba(230,230,230,.42)"><span>108</span></div>
<div class="cell d" style="left:629.75px;top:356px;width:34.05px;background:#b4ff00;border-right:1px solid rgba(225,225,225,.28);border-bottom:1px solid rgba(230,230,230,.42)"><span>108</span></div>
<div class="cell d" style="left:663.80px;top:356px;width:34.05px;background:#b4ff00;border-right:1px solid rgba(225,225,225,.28);border-bottom:1px solid rgba(230,230,230,.42)"><span>108</span></div>
<div class="cell d" style="left:697.85px;top:356px;width:34.05px;background:#b4ff00;border-right:1px solid rgba(225,225,225,.28);border-bottom:1px solid rgba(230,230,230,.42)"><span>108</span></div>
<div class="cell rh" style="left:13px;top:372px;width:50px;background:#efede5;border-bottom:1.28px solid #1e1e1e;padding-right:2.8px"><span>125 kPa</span></div>
<div class="cell d" style="left:63.00px;top:372px;width:28.00px;background:#80ff00;border-right:1px solid rgba(225,225,225,.28);border-bottom:1px solid rgba(230,230,230,.42)"><span>55</span></div>
<div class="cell d" style="left:91.00px;top:372px;width:28.00px;background:#80ff00;border-right:1px solid rgba(225,225,225,.28);border-bottom:1px solid rgba(230,230,230,.42)"><span>65</span></div>
<div class="cell d" style="left:119.00px;top:372px;width:34.05px;background:#80ff00;border-right:1px solid rgba(225,225,225,.28);border-bottom:1px solid rgba(230,230,230,.42)"><span>71</span></div>
<div class="cell d" style="left:153.05px;top:372px;width:34.05px;background:#80ff00;border-right:1px solid rgba(225,225,225,.28);border-bottom:1px solid rgba(230,230,230,.42)"><span>79</span></div>
<div class="cell d" style="left:187.10px;top:372px;width:34.05px;background:#80ff00;border-right:1px solid rgba(225,225,225,.28);border-bottom:1px solid rgba(230,230,230,.42)"><span>85</span></div>
<div class="cell d" style="left:221.15px;top:372px;width:34.05px;background:#80ff00;border-right:1px solid rgba(225,225,225,.28);border-bottom:1px solid rgba(230,230,230,.42)"><span>87</span></div>
<div class="cell d" style="left:255.20px;top:372px;width:34.05px;background:#80ff00;border-right:1px solid rgba(225,225,225,.28);border-bottom:1px solid rgba(230,230,230,.42)"><span>90</span></div>
<div class="cell d" style="left:289.25px;top:372px;width:34.05px;background:#88ff00;border-right:1px solid rgba(225,225,225,.28);border-bottom:1px solid rgba(230,230,230,.42)"><span>92</span></div>
<div class="cell d" style="left:323.30px;top:372px;width:34.05px;background:#9aff00;border-right:1px solid rgba(225,225,225,.28);border-bottom:1px solid rgba(230,230,230,.42)"><span>96</span></div>
<div class="cell d" style="left:357.35px;top:372px;width:34.05px;background:#9eff00;border-right:1px solid rgba(225,225,225,.28);border-bottom:1px solid rgba(230,230,230,.42)"><span>98</span></div>
<div class="cell d" style="left:391.40px;top:372px;width:34.05px;background:#b6ff00;border-right:1px solid rgba(225,225,225,.28);border-bottom:1px solid rgba(230,230,230,.42)"><span>104</span></div>
<div class="cell d" style="left:425.45px;top:372px;width:34.05px;background:#c9ff00;border-right:1px solid rgba(225,225,225,.28);border-bottom:1px solid rgba(230,230,230,.42)"><span>109</span></div>
<div class="cell d" style="left:459.50px;top:372px;width:34.05px;background:#d2ff00;border-right:1px solid rgba(225,225,225,.28);border-bottom:1px solid rgba(230,230,230,.42)"><span>111</span></div>
<div class="cell d" style="left:493.55px;top:372px;width:34.05px;background:#d7ff00;border-right:1px solid rgba(225,225,225,.28);border-bottom:1px solid rgba(230,230,230,.42)"><span>112</span></div>
<div class="cell d" style="left:527.60px;top:372px;width:34.05px;background:#dcff00;border-right:1px solid rgba(225,225,225,.28);border-bottom:1px solid rgba(230,230,230,.42)"><span>113</span></div>
<div class="cell d" style="left:561.65px;top:372px;width:34.05px;background:#dcff00;border-right:1px solid rgba(225,225,225,.28);border-bottom:1px solid rgba(230,230,230,.42)"><span>113</span></div>
<div class="cell d" style="left:595.70px;top:372px;width:34.05px;background:#dcff00;border-right:1px solid rgba(225,225,225,.28);border-bottom:1px solid rgba(230,230,230,.42)"><span>113</span></div>
<div class="cell d" style="left:629.75px;top:372px;width:34.05px;background:#dcff00;border-right:1px solid rgba(225,225,225,.28);border-bottom:1px solid rgba(230,230,230,.42)"><span>113</span></div>
<div class="cell d" style="left:663.80px;top:372px;width:34.05px;background:#dcff00;border-right:1px solid rgba(225,225,225,.28);border-bottom:1px solid rgba(230,230,230,.42)"><span>113</span></div>
<div class="cell d" style="left:697.85px;top:372px;width:34.05px;background:#dcff00;border-right:1px solid rgba(225,225,225,.28);border-bottom:1px solid rgba(230,230,230,.42)"><span>113</span></div>
<div class="cell rh" style="left:13px;top:388px;width:50px;background:#efede5;border-bottom:1.28px solid #1e1e1e;padding-right:2.8px"><span>135 kPa</span></div>
<div class="cell d" style="left:63.00px;top:388px;width:28.00px;background:#80ff00;border-right:1px solid rgba(225,225,225,.28);border-bottom:1px solid rgba(230,230,230,.42)"><span>55</span></div>
<div class="cell d" style="left:91.00px;top:388px;width:28.00px;background:#80ff00;border-right:1px solid rgba(225,225,225,.28);border-bottom:1px solid rgba(230,230,230,.42)"><span>65</span></div>
<div class="cell d" style="left:119.00px;top:388px;width:34.05px;background:#80ff00;border-right:1px solid rgba(225,225,225,.28);border-bottom:1px solid rgba(230,230,230,.42)"><span>72</span></div>
<div class="cell d" style="left:153.05px;top:388px;width:34.05px;background:#80ff00;border-right:1px solid rgba(225,225,225,.28);border-bottom:1px solid rgba(230,230,230,.42)"><span>81</span></div>
<div class="cell d" style="left:187.10px;top:388px;width:34.05px;background:#80ff00;border-right:1px solid rgba(225,225,225,.28);border-bottom:1px solid rgba(230,230,230,.42)"><span>86</span></div>
<div class="cell d" style="left:221.15px;top:388px;width:34.05px;background:#80ff00;border-right:1px solid rgba(225,225,225,.28);border-bottom:1px solid rgba(230,230,230,.42)"><span>89</span></div>
<div class="cell d" style="left:255.20px;top:388px;width:34.05px;background:#84ff00;border-right:1px solid rgba(225,225,225,.28);border-bottom:1px solid rgba(230,230,230,.42)"><span>91</span></div>
<div class="cell d" style="left:289.25px;top:388px;width:34.05px;background:#8cff00;border-right:1px solid rgba(225,225,225,.28);border-bottom:1px solid rgba(230,230,230,.42)"><span>93</span></div>
<div class="cell d" style="left:323.30px;top:388px;width:34.05px;background:#9aff00;border-right:1px solid rgba(225,225,225,.28);border-bottom:1px solid rgba(230,230,230,.42)"><span>96</span></div>
<div class="cell d" style="left:357.35px;top:388px;width:34.05px;background:#a0ff00;border-right:1px solid rgba(225,225,225,.28);border-bottom:1px solid rgba(230,230,230,.42)"><span>99</span></div>
<div class="cell d" style="left:391.40px;top:388px;width:34.05px;background:#b6ff00;border-right:1px solid rgba(225,225,225,.28);border-bottom:1px solid rgba(230,230,230,.42)"><span>104</span></div>
<div class="cell d" style="left:425.45px;top:388px;width:34.05px;background:#ceff00;border-right:1px solid rgba(225,225,225,.28);border-bottom:1px solid rgba(230,230,230,.42)"><span>110</span></div>
<div class="cell d" style="left:459.50px;top:388px;width:34.05px;background:#dbff00;border-right:1px solid rgba(225,225,225,.28);border-bottom:1px solid rgba(230,230,230,.42)"><span>114</span></div>
<div class="cell d" style="left:493.55px;top:388px;width:34.05px;background:#d8ff00;border-right:1px solid rgba(225,225,225,.28);border-bottom:1px solid rgba(230,230,230,.42)"><span>116</span></div>
<div class="cell d" style="left:527.60px;top:388px;width:34.05px;background:#d8ff00;border-right:1px solid rgba(225,225,225,.28);border-bottom:1px solid rgba(230,230,230,.42)"><span>116</span></div>
<div class="cell d" style="left:561.65px;top:388px;width:34.05px;background:#daff00;border-right:1px solid rgba(225,225,225,.28);border-bottom:1px solid rgba(230,230,230,.42)"><span>115</span></div>
<div class="cell d" style="left:595.70px;top:388px;width:34.05px;background:#d8ff00;border-right:1px solid rgba(225,225,225,.28);border-bottom:1px solid rgba(230,230,230,.42)"><span>116</span></div>
<div class="cell d" style="left:629.75px;top:388px;width:34.05px;background:#d8ff00;border-right:1px solid rgba(225,225,225,.28);border-bottom:1px solid rgba(230,230,230,.42)"><span>116</span></div>
<div class="cell d" style="left:663.80px;top:388px;width:34.05px;background:#d7ff00;border-right:1px solid rgba(225,225,225,.28);border-bottom:1px solid rgba(230,230,230,.42)"><span>117</span></div>
<div class="cell d" style="left:697.85px;top:388px;width:34.05px;background:#d7ff00;border-right:1px solid rgba(225,225,225,.28);border-bottom:1px solid rgba(230,230,230,.42)"><span>117</span></div>
<div class="cell rh" style="left:13px;top:404px;width:50px;background:#efede5;border-bottom:1.28px solid #1e1e1e;padding-right:2.8px"><span>145 kPa</span></div>
<div class="cell d" style="left:63.00px;top:404px;width:28.00px;background:#80ff00;border-right:1px solid rgba(225,225,225,.28);border-bottom:1px solid rgba(230,230,230,.42)"><span>55</span></div>
<div class="cell d" style="left:91.00px;top:404px;width:28.00px;background:#80ff00;border-right:1px solid rgba(225,225,225,.28);border-bottom:1px solid rgba(230,230,230,.42)"><span>65</span></div>
<div class="cell d" style="left:119.00px;top:404px;width:34.05px;background:#80ff00;border-right:1px solid rgba(225,225,225,.28);border-bottom:1px solid rgba(230,230,230,.42)"><span>73</span></div>
<div class="cell d" style="left:153.05px;top:404px;width:34.05px;background:#80ff00;border-right:1px solid rgba(225,225,225,.28);border-bottom:1px solid rgba(230,230,230,.42)"><span>82</span></div>
<div class="cell d" style="left:187.10px;top:404px;width:34.05px;background:#80ff00;border-right:1px solid rgba(225,225,225,.28);border-bottom:1px solid rgba(230,230,230,.42)"><span>86</span></div>
<div class="cell d" style="left:221.15px;top:404px;width:34.05px;background:#80ff00;border-right:1px solid rgba(225,225,225,.28);border-bottom:1px solid rgba(230,230,230,.42)"><span>90</span></div>
<div class="cell d" style="left:255.20px;top:404px;width:34.05px;background:#8cff00;border-right:1px solid rgba(225,225,225,.28);border-bottom:1px solid rgba(230,230,230,.42)"><span>93</span></div>
<div class="cell d" style="left:289.25px;top:404px;width:34.05px;background:#92ff00;border-right:1px solid rgba(225,225,225,.28);border-bottom:1px solid rgba(230,230,230,.42)"><span>94</span></div>
<div class="cell d" style="left:323.30px;top:404px;width:34.05px;background:#9cff00;border-right:1px solid rgba(225,225,225,.28);border-bottom:1px solid rgba(230,230,230,.42)"><span>97</span></div>
<div class="cell d" style="left:357.35px;top:404px;width:34.05px;background:#a0ff00;border-right:1px solid rgba(225,225,225,.28);border-bottom:1px solid rgba(230,230,230,.42)"><span>99</span></div>
<div class="cell d" style="left:391.40px;top:404px;width:34.05px;background:#baff00;border-right:1px solid rgba(225,225,225,.28);border-bottom:1px solid rgba(230,230,230,.42)"><span>105</span></div>
<div class="cell d" style="left:425.45px;top:404px;width:34.05px;background:#ceff00;border-right:1px solid rgba(225,225,225,.28);border-bottom:1px solid rgba(230,230,230,.42)"><span>110</span></div>
<div class="cell d" style="left:459.50px;top:404px;width:34.05px;background:#d9ff00;border-right:1px solid rgba(225,225,225,.28);border-bottom:1px solid rgba(230,230,230,.42)"><span>118</span></div>
<div class="cell d" style="left:493.55px;top:404px;width:34.05px;background:#dcff00;border-right:1px solid rgba(225,225,225,.28);border-bottom:1px solid rgba(230,230,230,.42)"><span>119</span></div>
<div class="cell d" style="left:527.60px;top:404px;width:34.05px;background:#dcff00;border-right:1px solid rgba(225,225,225,.28);border-bottom:1px solid rgba(230,230,230,.42)"><span>119</span></div>
<div class="cell d" style="left:561.65px;top:404px;width:34.05px;background:#deff00;border-right:1px solid rgba(225,225,225,.28);border-bottom:1px solid rgba(230,230,230,.42)"><span>120</span></div>
<div class="cell d" style="left:595.70px;top:404px;width:34.05px;background:#ffff00;border-right:1px solid rgba(225,225,225,.28);border-bottom:1px solid rgba(230,230,230,.42)"><span>121</span></div>
<div class="cell d" style="left:629.75px;top:404px;width:34.05px;background:#deff00;border-right:1px solid rgba(225,225,225,.28);border-bottom:1px solid rgba(230,230,230,.42)"><span>120</span></div>
<div class="cell d" style="left:663.80px;top:404px;width:34.05px;background:#deff00;border-right:1px solid rgba(225,225,225,.28);border-bottom:1px solid rgba(230,230,230,.42)"><span>120</span></div>
<div class="cell d" style="left:697.85px;top:404px;width:34.05px;background:#ffff00;border-right:1px solid rgba(225,225,225,.28);border-bottom:1px solid rgba(230,230,230,.42)"><span>121</span></div>
<div class="cell rh" style="left:13px;top:420px;width:50px;background:#efede5;border-bottom:1.28px solid #1e1e1e;padding-right:2.8px"><span>155 kPa</span></div>
<div class="cell d" style="left:63.00px;top:420px;width:28.00px;background:#80ff00;border-right:1px solid rgba(225,225,225,.28);border-bottom:1px solid rgba(230,230,230,.42)"><span>55</span></div>
<div class="cell d" style="left:91.00px;top:420px;width:28.00px;background:#80ff00;border-right:1px solid rgba(225,225,225,.28);border-bottom:1px solid rgba(230,230,230,.42)"><span>65</span></div>
<div class="cell d" style="left:119.00px;top:420px;width:34.05px;background:#80ff00;border-right:1px solid rgba(225,225,225,.28);border-bottom:1px solid rgba(230,230,230,.42)"><span>73</span></div>
<div class="cell d" style="left:153.05px;top:420px;width:34.05px;background:#80ff00;border-right:1px solid rgba(225,225,225,.28);border-bottom:1px solid rgba(230,230,230,.42)"><span>82</span></div>
<div class="cell d" style="left:187.10px;top:420px;width:34.05px;background:#80ff00;border-right:1px solid rgba(225,225,225,.28);border-bottom:1px solid rgba(230,230,230,.42)"><span>87</span></div>
<div class="cell d" style="left:221.15px;top:420px;width:34.05px;background:#80ff00;border-right:1px solid rgba(225,225,225,.28);border-bottom:1px solid rgba(230,230,230,.42)"><span>90</span></div>
<div class="cell d" style="left:255.20px;top:420px;width:34.05px;background:#92ff00;border-right:1px solid rgba(225,225,225,.28);border-bottom:1px solid rgba(230,230,230,.42)"><span>94</span></div>
<div class="cell d" style="left:289.25px;top:420px;width:34.05px;background:#98ff00;border-right:1px solid rgba(225,225,225,.28);border-bottom:1px solid rgba(230,230,230,.42)"><span>95</span></div>
<div class="cell d" style="left:323.30px;top:420px;width:34.05px;background:#9cff00;border-right:1px solid rgba(225,225,225,.28);border-bottom:1px solid rgba(230,230,230,.42)"><span>97</span></div>
<div class="cell d" style="left:357.35px;top:420px;width:34.05px;background:#a0ff00;border-right:1px solid rgba(225,225,225,.28);border-bottom:1px solid rgba(230,230,230,.42)"><span>99</span></div>
<div class="cell d" style="left:391.40px;top:420px;width:34.05px;background:#beff00;border-right:1px solid rgba(225,225,225,.28);border-bottom:1px solid rgba(230,230,230,.42)"><span>106</span></div>
<div class="cell d" style="left:425.45px;top:420px;width:34.05px;background:#d7ff00;border-right:1px solid rgba(225,225,225,.28);border-bottom:1px solid rgba(230,230,230,.42)"><span>112</span></div>
<div class="cell d" style="left:459.50px;top:420px;width:34.05px;background:#dcff00;border-right:1px solid rgba(225,225,225,.28);border-bottom:1px solid rgba(230,230,230,.42)"><span>119</span></div>
<div class="cell d" style="left:493.55px;top:420px;width:34.05px;background:#ffff00;border-right:1px solid rgba(225,225,225,.28);border-bottom:1px solid rgba(230,230,230,.42)"><span>122</span></div>
<div class="cell d" style="left:527.60px;top:420px;width:34.05px;background:#ffff00;border-right:1px solid rgba(225,225,225,.28);border-bottom:1px solid rgba(230,230,230,.42)"><span>123</span></div>
<div class="cell d" style="left:561.65px;top:420px;width:34.05px;background:#ffff00;border-right:1px solid rgba(225,225,225,.28);border-bottom:1px solid rgba(230,230,230,.42)"><span>124</span></div>
<div class="cell d" style="left:595.70px;top:420px;width:34.05px;background:#ffff00;border-right:1px solid rgba(225,225,225,.28);border-bottom:1px solid rgba(230,230,230,.42)"><span>123</span></div>
<div class="cell d" style="left:629.75px;top:420px;width:34.05px;background:#ffff00;border-right:1px solid rgba(225,225,225,.28);border-bottom:1px solid rgba(230,230,230,.42)"><span>123</span></div>
<div class="cell d" style="left:663.80px;top:420px;width:34.05px;background:#ffff00;border-right:1px solid rgba(225,225,225,.28);border-bottom:1px solid rgba(230,230,230,.42)"><span>125</span></div>
<div class="cell d" style="left:697.85px;top:420px;width:34.05px;background:#ffff00;border-right:1px solid rgba(225,225,225,.28);border-bottom:1px solid rgba(230,230,230,.42)"><span>124</span></div>
<div class="cell rh" style="left:13px;top:436px;width:50px;background:#efede5;border-bottom:1.28px solid #1e1e1e;padding-right:2.8px"><span>165 kPa</span></div>
<div class="cell d" style="left:63.00px;top:436px;width:28.00px;background:#80ff00;border-right:1px solid rgba(225,225,225,.28);border-bottom:1px solid rgba(230,230,230,.42)"><span>55</span></div>
<div class="cell d" style="left:91.00px;top:436px;width:28.00px;background:#80ff00;border-right:1px solid rgba(225,225,225,.28);border-bottom:1px solid rgba(230,230,230,.42)"><span>65</span></div>
<div class="cell d" style="left:119.00px;top:436px;width:34.05px;background:#80ff00;border-right:1px solid rgba(225,225,225,.28);border-bottom:1px solid rgba(230,230,230,.42)"><span>75</span></div>
<div class="cell d" style="left:153.05px;top:436px;width:34.05px;background:#80ff00;border-right:1px solid rgba(225,225,225,.28);border-bottom:1px solid rgba(230,230,230,.42)"><span>84</span></div>
<div class="cell d" style="left:187.10px;top:436px;width:34.05px;background:#80ff00;border-right:1px solid rgba(225,225,225,.28);border-bottom:1px solid rgba(230,230,230,.42)"><span>88</span></div>
<div class="cell d" style="left:221.15px;top:436px;width:34.05px;background:#84ff00;border-right:1px solid rgba(225,225,225,.28);border-bottom:1px solid rgba(230,230,230,.42)"><span>91</span></div>
<div class="cell d" style="left:255.20px;top:436px;width:34.05px;background:#98ff00;border-right:1px solid rgba(225,225,225,.28);border-bottom:1px solid rgba(230,230,230,.42)"><span>95</span></div>
<div class="cell d" style="left:289.25px;top:436px;width:34.05px;background:#98ff00;border-right:1px solid rgba(225,225,225,.28);border-bottom:1px solid rgba(230,230,230,.42)"><span>95</span></div>
<div class="cell d" style="left:323.30px;top:436px;width:34.05px;background:#9eff00;border-right:1px solid rgba(225,225,225,.28);border-bottom:1px solid rgba(230,230,230,.42)"><span>98</span></div>
<div class="cell d" style="left:357.35px;top:436px;width:34.05px;background:#a2ff00;border-right:1px solid rgba(225,225,225,.28);border-bottom:1px solid rgba(230,230,230,.42)"><span>100</span></div>
<div class="cell d" style="left:391.40px;top:436px;width:34.05px;background:#beff00;border-right:1px solid rgba(225,225,225,.28);border-bottom:1px solid rgba(230,230,230,.42)"><span>106</span></div>
<div class="cell d" style="left:425.45px;top:436px;width:34.05px;background:#d7ff00;border-right:1px solid rgba(225,225,225,.28);border-bottom:1px solid rgba(230,230,230,.42)"><span>112</span></div>
<div class="cell d" style="left:459.50px;top:436px;width:34.05px;background:#deff00;border-right:1px solid rgba(225,225,225,.28);border-bottom:1px solid rgba(230,230,230,.42)"><span>120</span></div>
<div class="cell d" style="left:493.55px;top:436px;width:34.05px;background:#ffff00;border-right:1px solid rgba(225,225,225,.28);border-bottom:1px solid rgba(230,230,230,.42)"><span>125</span></div>
<div class="cell d" style="left:527.60px;top:436px;width:34.05px;background:#ffff00;border-right:1px solid rgba(225,225,225,.28);border-bottom:1px solid rgba(230,230,230,.42)"><span>127</span></div>
<div class="cell d" style="left:561.65px;top:436px;width:34.05px;background:#ffff00;border-right:1px solid rgba(225,225,225,.28);border-bottom:1px solid rgba(230,230,230,.42)"><span>127</span></div>
<div class="cell d" style="left:595.70px;top:436px;width:34.05px;background:#ffff00;border-right:1px solid rgba(225,225,225,.28);border-bottom:1px solid rgba(230,230,230,.42)"><span>127</span></div>
<div class="cell d" style="left:629.75px;top:436px;width:34.05px;background:#ffff00;border-right:1px solid rgba(225,225,225,.28);border-bottom:1px solid rgba(230,230,230,.42)"><span>127</span></div>
<div class="cell d" style="left:663.80px;top:436px;width:34.05px;background:#ffff00;border-right:1px solid rgba(225,225,225,.28);border-bottom:1px solid rgba(230,230,230,.42)"><span>127</span></div>
<div class="cell d" style="left:697.85px;top:436px;width:34.05px;background:#ffff00;border-right:1px solid rgba(225,225,225,.28);border-bottom:1px solid rgba(230,230,230,.42)"><span>126</span></div>
<div class="cell rh" style="left:13px;top:452px;width:50px;background:#efede5;border-bottom:1.28px solid #1e1e1e;padding-right:2.8px"><span>175 kPa</span></div>
<div class="cell d" style="left:63.00px;top:452px;width:28.00px;background:#80ff00;border-right:1px solid rgba(225,225,225,.28);border-bottom:1px solid rgba(230,230,230,.42)"><span>55</span></div>
<div class="cell d" style="left:91.00px;top:452px;width:28.00px;background:#80ff00;border-right:1px solid rgba(225,225,225,.28);border-bottom:1px solid rgba(230,230,230,.42)"><span>65</span></div>
<div class="cell d" style="left:119.00px;top:452px;width:34.05px;background:#80ff00;border-right:1px solid rgba(225,225,225,.28);border-bottom:1px solid rgba(230,230,230,.42)"><span>75</span></div>
<div class="cell d" style="left:153.05px;top:452px;width:34.05px;background:#80ff00;border-right:1px solid rgba(225,225,225,.28);border-bottom:1px solid rgba(230,230,230,.42)"><span>84</span></div>
<div class="cell d" style="left:187.10px;top:452px;width:34.05px;background:#80ff00;border-right:1px solid rgba(225,225,225,.28);border-bottom:1px solid rgba(230,230,230,.42)"><span>89</span></div>
<div class="cell d" style="left:221.15px;top:452px;width:34.05px;background:#84ff00;border-right:1px solid rgba(225,225,225,.28);border-bottom:1px solid rgba(230,230,230,.42)"><span>91</span></div>
<div class="cell d" style="left:255.20px;top:452px;width:34.05px;background:#9aff00;border-right:1px solid rgba(225,225,225,.28);border-bottom:1px solid rgba(230,230,230,.42)"><span>96</span></div>
<div class="cell d" style="left:289.25px;top:452px;width:34.05px;background:#9aff00;border-right:1px solid rgba(225,225,225,.28);border-bottom:1px solid rgba(230,230,230,.42)"><span>96</span></div>
<div class="cell d" style="left:323.30px;top:452px;width:34.05px;background:#9eff00;border-right:1px solid rgba(225,225,225,.28);border-bottom:1px solid rgba(230,230,230,.42)"><span>98</span></div>
<div class="cell d" style="left:357.35px;top:452px;width:34.05px;background:#a2ff00;border-right:1px solid rgba(225,225,225,.28);border-bottom:1px solid rgba(230,230,230,.42)"><span>100</span></div>
<div class="cell d" style="left:391.40px;top:452px;width:34.05px;background:#c2ff00;border-right:1px solid rgba(225,225,225,.28);border-bottom:1px solid rgba(230,230,230,.42)"><span>107</span></div>
<div class="cell d" style="left:425.45px;top:452px;width:34.05px;background:#d7ff00;border-right:1px solid rgba(225,225,225,.28);border-bottom:1px solid rgba(230,230,230,.42)"><span>112</span></div>
<div class="cell d" style="left:459.50px;top:452px;width:34.05px;background:#ffff00;border-right:1px solid rgba(225,225,225,.28);border-bottom:1px solid rgba(230,230,230,.42)"><span>121</span></div>
<div class="cell d" style="left:493.55px;top:452px;width:34.05px;background:#ffff00;border-right:1px solid rgba(225,225,225,.28);border-bottom:1px solid rgba(230,230,230,.42)"><span>129</span></div>
<div class="cell d" style="left:527.60px;top:452px;width:34.05px;background:#ffff00;border-right:1px solid rgba(225,225,225,.28);border-bottom:1px solid rgba(230,230,230,.42)"><span>129</span></div>
<div class="cell d" style="left:561.65px;top:452px;width:34.05px;background:#ffff00;border-right:1px solid rgba(225,225,225,.28);border-bottom:1px solid rgba(230,230,230,.42)"><span>129</span></div>
<div class="cell d" style="left:595.70px;top:452px;width:34.05px;background:#ffff00;border-right:1px solid rgba(225,225,225,.28);border-bottom:1px solid rgba(230,230,230,.42)"><span>129</span></div>
<div class="cell d" style="left:629.75px;top:452px;width:34.05px;background:#ffff00;border-right:1px solid rgba(225,225,225,.28);border-bottom:1px solid rgba(230,230,230,.42)"><span>129</span></div>
<div class="cell d" style="left:663.80px;top:452px;width:34.05px;background:#ffff00;border-right:1px solid rgba(225,225,225,.28);border-bottom:1px solid rgba(230,230,230,.42)"><span>128</span></div>
<div class="cell d" style="left:697.85px;top:452px;width:34.05px;background:#ffff00;border-right:1px solid rgba(225,225,225,.28);border-bottom:1px solid rgba(230,230,230,.42)"><span>129</span></div>
<div class="cell rh" style="left:13px;top:468px;width:50px;background:#efede5;border-bottom:1.28px solid #1e1e1e;padding-right:2.8px"><span>185 kPa</span></div>
<div class="cell d" style="left:63.00px;top:468px;width:28.00px;background:#80ff00;border-right:1px solid rgba(225,225,225,.28);border-bottom:1px solid rgba(230,230,230,.42)"><span>55</span></div>
<div class="cell d" style="left:91.00px;top:468px;width:28.00px;background:#80ff00;border-right:1px solid rgba(225,225,225,.28);border-bottom:1px solid rgba(230,230,230,.42)"><span>65</span></div>
<div class="cell d" style="left:119.00px;top:468px;width:34.05px;background:#80ff00;border-right:1px solid rgba(225,225,225,.28);border-bottom:1px solid rgba(230,230,230,.42)"><span>75</span></div>
<div class="cell d" style="left:153.05px;top:468px;width:34.05px;background:#80ff00;border-right:1px solid rgba(225,225,225,.28);border-bottom:1px solid rgba(230,230,230,.42)"><span>84</span></div>
<div class="cell d" style="left:187.10px;top:468px;width:34.05px;background:#80ff00;border-right:1px solid rgba(225,225,225,.28);border-bottom:1px solid rgba(230,230,230,.42)"><span>89</span></div>
<div class="cell d" style="left:221.15px;top:468px;width:34.05px;background:#84ff00;border-right:1px solid rgba(225,225,225,.28);border-bottom:1px solid rgba(230,230,230,.42)"><span>91</span></div>
<div class="cell d" style="left:255.20px;top:468px;width:34.05px;background:#9aff00;border-right:1px solid rgba(225,225,225,.28);border-bottom:1px solid rgba(230,230,230,.42)"><span>96</span></div>
<div class="cell d" style="left:289.25px;top:468px;width:34.05px;background:#9aff00;border-right:1px solid rgba(225,225,225,.28);border-bottom:1px solid rgba(230,230,230,.42)"><span>96</span></div>
<div class="cell d" style="left:323.30px;top:468px;width:34.05px;background:#9eff00;border-right:1px solid rgba(225,225,225,.28);border-bottom:1px solid rgba(230,230,230,.42)"><span>98</span></div>
<div class="cell d" style="left:357.35px;top:468px;width:34.05px;background:#a2ff00;border-right:1px solid rgba(225,225,225,.28);border-bottom:1px solid rgba(230,230,230,.42)"><span>100</span></div>
<div class="cell d" style="left:391.40px;top:468px;width:34.05px;background:#c2ff00;border-right:1px solid rgba(225,225,225,.28);border-bottom:1px solid rgba(230,230,230,.42)"><span>107</span></div>
<div class="cell d" style="left:425.45px;top:468px;width:34.05px;background:#d7ff00;border-right:1px solid rgba(225,225,225,.28);border-bottom:1px solid rgba(230,230,230,.42)"><span>112</span></div>
<div class="cell d" style="left:459.50px;top:468px;width:34.05px;background:#ffff00;border-right:1px solid rgba(225,225,225,.28);border-bottom:1px solid rgba(230,230,230,.42)"><span>121</span></div>
<div class="cell d" style="left:493.55px;top:468px;width:34.05px;background:#ffff00;border-right:1px solid rgba(225,225,225,.28);border-bottom:1px solid rgba(230,230,230,.42)"><span>129</span></div>
<div class="cell d" style="left:527.60px;top:468px;width:34.05px;background:#ffff00;border-right:1px solid rgba(225,225,225,.28);border-bottom:1px solid rgba(230,230,230,.42)"><span>129</span></div>
<div class="cell d" style="left:561.65px;top:468px;width:34.05px;background:#ffff00;border-right:1px solid rgba(225,225,225,.28);border-bottom:1px solid rgba(230,230,230,.42)"><span>129</span></div>
<div class="cell d" style="left:595.70px;top:468px;width:34.05px;background:#ffff00;border-right:1px solid rgba(225,225,225,.28);border-bottom:1px solid rgba(230,230,230,.42)"><span>129</span></div>
<div class="cell d" style="left:629.75px;top:468px;width:34.05px;background:#ffff00;border-right:1px solid rgba(225,225,225,.28);border-bottom:1px solid rgba(230,230,230,.42)"><span>129</span></div>
<div class="cell d" style="left:663.80px;top:468px;width:34.05px;background:#ffff00;border-right:1px solid rgba(225,225,225,.28);border-bottom:1px solid rgba(230,230,230,.42)"><span>129</span></div>
<div class="cell d" style="left:697.85px;top:468px;width:34.05px;background:#ffff00;border-right:1px solid rgba(225,225,225,.28);border-bottom:1px solid rgba(230,230,230,.42)"><span>129</span></div>
<div class="cell rh" style="left:13px;top:484px;width:50px;background:#efede5;border-bottom:1.28px solid #1e1e1e;padding-right:2.8px"><span>195 kPa</span></div>
<div class="cell d" style="left:63.00px;top:484px;width:28.00px;background:#80ff00;border-right:1px solid rgba(225,225,225,.28);border-bottom:1px solid rgba(230,230,230,.42)"><span>55</span></div>
<div class="cell d" style="left:91.00px;top:484px;width:28.00px;background:#80ff00;border-right:1px solid rgba(225,225,225,.28);border-bottom:1px solid rgba(230,230,230,.42)"><span>65</span></div>
<div class="cell d" style="left:119.00px;top:484px;width:34.05px;background:#80ff00;border-right:1px solid rgba(225,225,225,.28);border-bottom:1px solid rgba(230,230,230,.42)"><span>75</span></div>
<div class="cell d" style="left:153.05px;top:484px;width:34.05px;background:#80ff00;border-right:1px solid rgba(225,225,225,.28);border-bottom:1px solid rgba(230,230,230,.42)"><span>84</span></div>
<div class="cell d" style="left:187.10px;top:484px;width:34.05px;background:#80ff00;border-right:1px solid rgba(225,225,225,.28);border-bottom:1px solid rgba(230,230,230,.42)"><span>89</span></div>
<div class="cell d" style="left:221.15px;top:484px;width:34.05px;background:#84ff00;border-right:1px solid rgba(225,225,225,.28);border-bottom:1px solid rgba(230,230,230,.42)"><span>91</span></div>
<div class="cell d" style="left:255.20px;top:484px;width:34.05px;background:#9aff00;border-right:1px solid rgba(225,225,225,.28);border-bottom:1px solid rgba(230,230,230,.42)"><span>96</span></div>
<div class="cell d" style="left:289.25px;top:484px;width:34.05px;background:#9aff00;border-right:1px solid rgba(225,225,225,.28);border-bottom:1px solid rgba(230,230,230,.42)"><span>96</span></div>
<div class="cell d" style="left:323.30px;top:484px;width:34.05px;background:#9eff00;border-right:1px solid rgba(225,225,225,.28);border-bottom:1px solid rgba(230,230,230,.42)"><span>98</span></div>
<div class="cell d" style="left:357.35px;top:484px;width:34.05px;background:#a2ff00;border-right:1px solid rgba(225,225,225,.28);border-bottom:1px solid rgba(230,230,230,.42)"><span>100</span></div>
<div class="cell d" style="left:391.40px;top:484px;width:34.05px;background:#c2ff00;border-right:1px solid rgba(225,225,225,.28);border-bottom:1px solid rgba(230,230,230,.42)"><span>107</span></div>
<div class="cell d" style="left:425.45px;top:484px;width:34.05px;background:#d7ff00;border-right:1px solid rgba(225,225,225,.28);border-bottom:1px solid rgba(230,230,230,.42)"><span>112</span></div>
<div class="cell d" style="left:459.50px;top:484px;width:34.05px;background:#ffff00;border-right:1px solid rgba(225,225,225,.28);border-bottom:1px solid rgba(230,230,230,.42)"><span>121</span></div>
<div class="cell d" style="left:493.55px;top:484px;width:34.05px;background:#ffff00;border-right:1px solid rgba(225,225,225,.28);border-bottom:1px solid rgba(230,230,230,.42)"><span>129</span></div>
<div class="cell d" style="left:527.60px;top:484px;width:34.05px;background:#ffff00;border-right:1px solid rgba(225,225,225,.28);border-bottom:1px solid rgba(230,230,230,.42)"><span>129</span></div>
<div class="cell d" style="left:561.65px;top:484px;width:34.05px;background:#ffff00;border-right:1px solid rgba(225,225,225,.28);border-bottom:1px solid rgba(230,230,230,.42)"><span>129</span></div>
<div class="cell d" style="left:595.70px;top:484px;width:34.05px;background:#ffff00;border-right:1px solid rgba(225,225,225,.28);border-bottom:1px solid rgba(230,230,230,.42)"><span>129</span></div>
<div class="cell d" style="left:629.75px;top:484px;width:34.05px;background:#ffff00;border-right:1px solid rgba(225,225,225,.28);border-bottom:1px solid rgba(230,230,230,.42)"><span>129</span></div>
<div class="cell d" style="left:663.80px;top:484px;width:34.05px;background:#ffff00;border-right:1px solid rgba(225,225,225,.28);border-bottom:1px solid rgba(230,230,230,.42)"><span>129</span></div>
<div class="cell d" style="left:697.85px;top:484px;width:34.05px;background:#ffff00;border-right:1px solid rgba(225,225,225,.28);border-bottom:1px solid rgba(230,230,230,.42)"><span>129</span></div>
<div class="cell rh" style="left:13px;top:500px;width:50px;background:#efede5;border-bottom:1.28px solid #1e1e1e;padding-right:2.8px"><span>205 kPa</span></div>
<div class="cell d" style="left:63.00px;top:500px;width:28.00px;background:#80ff00;border-right:1px solid rgba(225,225,225,.28);border-bottom:1px solid rgba(230,230,230,.42)"><span>55</span></div>
<div class="cell d" style="left:91.00px;top:500px;width:28.00px;background:#80ff00;border-right:1px solid rgba(225,225,225,.28);border-bottom:1px solid rgba(230,230,230,.42)"><span>65</span></div>
<div class="cell d" style="left:119.00px;top:500px;width:34.05px;background:#80ff00;border-right:1px solid rgba(225,225,225,.28);border-bottom:1px solid rgba(230,230,230,.42)"><span>75</span></div>
<div class="cell d" style="left:153.05px;top:500px;width:34.05px;background:#80ff00;border-right:1px solid rgba(225,225,225,.28);border-bottom:1px solid rgba(230,230,230,.42)"><span>84</span></div>
<div class="cell d" style="left:187.10px;top:500px;width:34.05px;background:#80ff00;border-right:1px solid rgba(225,225,225,.28);border-bottom:1px solid rgba(230,230,230,.42)"><span>89</span></div>
<div class="cell d" style="left:221.15px;top:500px;width:34.05px;background:#84ff00;border-right:1px solid rgba(225,225,225,.28);border-bottom:1px solid rgba(230,230,230,.42)"><span>91</span></div>
<div class="cell d" style="left:255.20px;top:500px;width:34.05px;background:#9aff00;border-right:1px solid rgba(225,225,225,.28);border-bottom:1px solid rgba(230,230,230,.42)"><span>96</span></div>
<div class="cell d" style="left:289.25px;top:500px;width:34.05px;background:#9aff00;border-right:1px solid rgba(225,225,225,.28);border-bottom:1px solid rgba(230,230,230,.42)"><span>96</span></div>
<div class="cell d" style="left:323.30px;top:500px;width:34.05px;background:#9eff00;border-right:1px solid rgba(225,225,225,.28);border-bottom:1px solid rgba(230,230,230,.42)"><span>98</span></div>
<div class="cell d" style="left:357.35px;top:500px;width:34.05px;background:#a2ff00;border-right:1px solid rgba(225,225,225,.28);border-bottom:1px solid rgba(230,230,230,.42)"><span>100</span></div>
<div class="cell d" style="left:391.40px;top:500px;width:34.05px;background:#c2ff00;border-right:1px solid rgba(225,225,225,.28);border-bottom:1px solid rgba(230,230,230,.42)"><span>107</span></div>
<div class="cell d" style="left:425.45px;top:500px;width:34.05px;background:#d7ff00;border-right:1px solid rgba(225,225,225,.28);border-bottom:1px solid rgba(230,230,230,.42)"><span>112</span></div>
<div class="cell d" style="left:459.50px;top:500px;width:34.05px;background:#ffff00;border-right:1px solid rgba(225,225,225,.28);border-bottom:1px solid rgba(230,230,230,.42)"><span>121</span></div>
<div class="cell d" style="left:493.55px;top:500px;width:34.05px;background:#ffff00;border-right:1px solid rgba(225,225,225,.28);border-bottom:1px solid rgba(230,230,230,.42)"><span>129</span></div>
<div class="cell d" style="left:527.60px;top:500px;width:34.05px;background:#ffff00;border-right:1px solid rgba(225,225,225,.28);border-bottom:1px solid rgba(230,230,230,.42)"><span>129</span></div>
<div class="cell d" style="left:561.65px;top:500px;width:34.05px;background:#ffff00;border-right:1px solid rgba(225,225,225,.28);border-bottom:1px solid rgba(230,230,230,.42)"><span>129</span></div>
<div class="cell d" style="left:595.70px;top:500px;width:34.05px;background:#ffff00;border-right:1px solid rgba(225,225,225,.28);border-bottom:1px solid rgba(230,230,230,.42)"><span>129</span></div>
<div class="cell d" style="left:629.75px;top:500px;width:34.05px;background:#ffff00;border-right:1px solid rgba(225,225,225,.28);border-bottom:1px solid rgba(230,230,230,.42)"><span>129</span></div>
<div class="cell d" style="left:663.80px;top:500px;width:34.05px;background:#ffff00;border-right:1px solid rgba(225,225,225,.28);border-bottom:1px solid rgba(230,230,230,.42)"><span>129</span></div>
<div class="cell d" style="left:697.85px;top:500px;width:34.05px;background:#ffff00;border-right:1px solid rgba(225,225,225,.28);border-bottom:1px solid rgba(230,230,230,.42)"><span>129</span></div>
<div class="cell rh" style="left:13px;top:516px;width:50px;background:#efede5;border-bottom:1.28px solid #1e1e1e;padding-right:2.8px"><span>215 kPa</span></div>
<div class="cell d" style="left:63.00px;top:516px;width:28.00px;background:#80ff00;border-right:1px solid rgba(225,225,225,.28);border-bottom:1px solid rgba(230,230,230,.42)"><span>55</span></div>
<div class="cell d" style="left:91.00px;top:516px;width:28.00px;background:#80ff00;border-right:1px solid rgba(225,225,225,.28);border-bottom:1px solid rgba(230,230,230,.42)"><span>65</span></div>
<div class="cell d" style="left:119.00px;top:516px;width:34.05px;background:#80ff00;border-right:1px solid rgba(225,225,225,.28);border-bottom:1px solid rgba(230,230,230,.42)"><span>75</span></div>
<div class="cell d" style="left:153.05px;top:516px;width:34.05px;background:#80ff00;border-right:1px solid rgba(225,225,225,.28);border-bottom:1px solid rgba(230,230,230,.42)"><span>84</span></div>
<div class="cell d" style="left:187.10px;top:516px;width:34.05px;background:#80ff00;border-right:1px solid rgba(225,225,225,.28);border-bottom:1px solid rgba(230,230,230,.42)"><span>89</span></div>
<div class="cell d" style="left:221.15px;top:516px;width:34.05px;background:#84ff00;border-right:1px solid rgba(225,225,225,.28);border-bottom:1px solid rgba(230,230,230,.42)"><span>91</span></div>
<div class="cell d" style="left:255.20px;top:516px;width:34.05px;background:#9aff00;border-right:1px solid rgba(225,225,225,.28);border-bottom:1px solid rgba(230,230,230,.42)"><span>96</span></div>
<div class="cell d" style="left:289.25px;top:516px;width:34.05px;background:#9aff00;border-right:1px solid rgba(225,225,225,.28);border-bottom:1px solid rgba(230,230,230,.42)"><span>96</span></div>
<div class="cell d" style="left:323.30px;top:516px;width:34.05px;background:#9eff00;border-right:1px solid rgba(225,225,225,.28);border-bottom:1px solid rgba(230,230,230,.42)"><span>98</span></div>
<div class="cell d" style="left:357.35px;top:516px;width:34.05px;background:#a2ff00;border-right:1px solid rgba(225,225,225,.28);border-bottom:1px solid rgba(230,230,230,.42)"><span>100</span></div>
<div class="cell d" style="left:391.40px;top:516px;width:34.05px;background:#c2ff00;border-right:1px solid rgba(225,225,225,.28);border-bottom:1px solid rgba(230,230,230,.42)"><span>107</span></div>
<div class="cell d" style="left:425.45px;top:516px;width:34.05px;background:#d7ff00;border-right:1px solid rgba(225,225,225,.28);border-bottom:1px solid rgba(230,230,230,.42)"><span>112</span></div>
<div class="cell d" style="left:459.50px;top:516px;width:34.05px;background:#ffff00;border-right:1px solid rgba(225,225,225,.28);border-bottom:1px solid rgba(230,230,230,.42)"><span>121</span></div>
<div class="cell d" style="left:493.55px;top:516px;width:34.05px;background:#ffff00;border-right:1px solid rgba(225,225,225,.28);border-bottom:1px solid rgba(230,230,230,.42)"><span>129</span></div>
<div class="cell d" style="left:527.60px;top:516px;width:34.05px;background:#ffff00;border-right:1px solid rgba(225,225,225,.28);border-bottom:1px solid rgba(230,230,230,.42)"><span>129</span></div>
<div class="cell d" style="left:561.65px;top:516px;width:34.05px;background:#ffff00;border-right:1px solid rgba(225,225,225,.28);border-bottom:1px solid rgba(230,230,230,.42)"><span>129</span></div>
<div class="cell d" style="left:595.70px;top:516px;width:34.05px;background:#ffff00;border-right:1px solid rgba(225,225,225,.28);border-bottom:1px solid rgba(230,230,230,.42)"><span>129</span></div>
<div class="cell d" style="left:629.75px;top:516px;width:34.05px;background:#ffff00;border-right:1px solid rgba(225,225,225,.28);border-bottom:1px solid rgba(230,230,230,.42)"><span>129</span></div>
<div class="cell d" style="left:663.80px;top:516px;width:34.05px;background:#ffff00;border-right:1px solid rgba(225,225,225,.28);border-bottom:1px solid rgba(230,230,230,.42)"><span>129</span></div>
<div class="cell d" style="left:697.85px;top:516px;width:34.05px;background:#ffff00;border-right:1px solid rgba(225,225,225,.28);border-bottom:1px solid rgba(230,230,230,.42)"><span>129</span></div>
<div class="cell rh" style="left:13px;top:532px;width:50px;background:#efede5;border-bottom:1.28px solid #1e1e1e;padding-right:2.8px"><span>225 kPa</span></div>
<div class="cell d" style="left:63.00px;top:532px;width:28.00px;background:#80ff00;border-right:1px solid rgba(225,225,225,.28);border-bottom:1px solid rgba(230,230,230,.42)"><span>55</span></div>
<div class="cell d" style="left:91.00px;top:532px;width:28.00px;background:#80ff00;border-right:1px solid rgba(225,225,225,.28);border-bottom:1px solid rgba(230,230,230,.42)"><span>65</span></div>
<div class="cell d" style="left:119.00px;top:532px;width:34.05px;background:#80ff00;border-right:1px solid rgba(225,225,225,.28);border-bottom:1px solid rgba(230,230,230,.42)"><span>75</span></div>
<div class="cell d" style="left:153.05px;top:532px;width:34.05px;background:#80ff00;border-right:1px solid rgba(225,225,225,.28);border-bottom:1px solid rgba(230,230,230,.42)"><span>84</span></div>
<div class="cell d" style="left:187.10px;top:532px;width:34.05px;background:#80ff00;border-right:1px solid rgba(225,225,225,.28);border-bottom:1px solid rgba(230,230,230,.42)"><span>89</span></div>
<div class="cell d" style="left:221.15px;top:532px;width:34.05px;background:#84ff00;border-right:1px solid rgba(225,225,225,.28);border-bottom:1px solid rgba(230,230,230,.42)"><span>91</span></div>
<div class="cell d" style="left:255.20px;top:532px;width:34.05px;background:#9aff00;border-right:1px solid rgba(225,225,225,.28);border-bottom:1px solid rgba(230,230,230,.42)"><span>96</span></div>
<div class="cell d" style="left:289.25px;top:532px;width:34.05px;background:#9aff00;border-right:1px solid rgba(225,225,225,.28);border-bottom:1px solid rgba(230,230,230,.42)"><span>96</span></div>
<div class="cell d" style="left:323.30px;top:532px;width:34.05px;background:#9eff00;border-right:1px solid rgba(225,225,225,.28);border-bottom:1px solid rgba(230,230,230,.42)"><span>98</span></div>
<div class="cell d" style="left:357.35px;top:532px;width:34.05px;background:#a2ff00;border-right:1px solid rgba(225,225,225,.28);border-bottom:1px solid rgba(230,230,230,.42)"><span>100</span></div>
<div class="cell d" style="left:391.40px;top:532px;width:34.05px;background:#c2ff00;border-right:1px solid rgba(225,225,225,.28);border-bottom:1px solid rgba(230,230,230,.42)"><span>107</span></div>
<div class="cell d" style="left:425.45px;top:532px;width:34.05px;background:#d7ff00;border-right:1px solid rgba(225,225,225,.28);border-bottom:1px solid rgba(230,230,230,.42)"><span>112</span></div>
<div class="cell d" style="left:459.50px;top:532px;width:34.05px;background:#ffff00;border-right:1px solid rgba(225,225,225,.28);border-bottom:1px solid rgba(230,230,230,.42)"><span>121</span></div>
<div class="cell d" style="left:493.55px;top:532px;width:34.05px;background:#ffff00;border-right:1px solid rgba(225,225,225,.28);border-bottom:1px solid rgba(230,230,230,.42)"><span>129</span></div>
<div class="cell d" style="left:527.60px;top:532px;width:34.05px;background:#ffff00;border-right:1px solid rgba(225,225,225,.28);border-bottom:1px solid rgba(230,230,230,.42)"><span>129</span></div>
<div class="cell d" style="left:561.65px;top:532px;width:34.05px;background:#ffff00;border-right:1px solid rgba(225,225,225,.28);border-bottom:1px solid rgba(230,230,230,.42)"><span>129</span></div>
<div class="cell d" style="left:595.70px;top:532px;width:34.05px;background:#ffff00;border-right:1px solid rgba(225,225,225,.28);border-bottom:1px solid rgba(230,230,230,.42)"><span>129</span></div>
<div class="cell d" style="left:629.75px;top:532px;width:34.05px;background:#ffff00;border-right:1px solid rgba(225,225,225,.28);border-bottom:1px solid rgba(230,230,230,.42)"><span>129</span></div>
<div class="cell d" style="left:663.80px;top:532px;width:34.05px;background:#ffff00;border-right:1px solid rgba(225,225,225,.28);border-bottom:1px solid rgba(230,230,230,.42)"><span>129</span></div>
<div class="cell d" style="left:697.85px;top:532px;width:34.05px;background:#ffff00;border-right:1px solid rgba(225,225,225,.28);border-bottom:1px solid rgba(230,230,230,.42)"><span>129</span></div>
<div class="cell rh" style="left:13px;top:548px;width:50px;background:#efede5;border-bottom:1.28px solid #1e1e1e;padding-right:2.8px"><span>235 kPa</span></div>
<div class="cell d" style="left:63.00px;top:548px;width:28.00px;background:#80ff00;border-right:1px solid rgba(225,225,225,.28);border-bottom:1px solid rgba(230,230,230,.42)"><span>55</span></div>
<div class="cell d" style="left:91.00px;top:548px;width:28.00px;background:#80ff00;border-right:1px solid rgba(225,225,225,.28);border-bottom:1px solid rgba(230,230,230,.42)"><span>65</span></div>
<div class="cell d" style="left:119.00px;top:548px;width:34.05px;background:#80ff00;border-right:1px solid rgba(225,225,225,.28);border-bottom:1px solid rgba(230,230,230,.42)"><span>75</span></div>
<div class="cell d" style="left:153.05px;top:548px;width:34.05px;background:#80ff00;border-right:1px solid rgba(225,225,225,.28);border-bottom:1px solid rgba(230,230,230,.42)"><span>84</span></div>
<div class="cell d" style="left:187.10px;top:548px;width:34.05px;background:#80ff00;border-right:1px solid rgba(225,225,225,.28);border-bottom:1px solid rgba(230,230,230,.42)"><span>89</span></div>
<div class="cell d" style="left:221.15px;top:548px;width:34.05px;background:#84ff00;border-right:1px solid rgba(225,225,225,.28);border-bottom:1px solid rgba(230,230,230,.42)"><span>91</span></div>
<div class="cell d" style="left:255.20px;top:548px;width:34.05px;background:#9aff00;border-right:1px solid rgba(225,225,225,.28);border-bottom:1px solid rgba(230,230,230,.42)"><span>96</span></div>
<div class="cell d" style="left:289.25px;top:548px;width:34.05px;background:#9aff00;border-right:1px solid rgba(225,225,225,.28);border-bottom:1px solid rgba(230,230,230,.42)"><span>96</span></div>
<div class="cell d" style="left:323.30px;top:548px;width:34.05px;background:#9eff00;border-right:1px solid rgba(225,225,225,.28);border-bottom:1px solid rgba(230,230,230,.42)"><span>98</span></div>
<div class="cell d" style="left:357.35px;top:548px;width:34.05px;background:#a2ff00;border-right:1px solid rgba(225,225,225,.28);border-bottom:1px solid rgba(230,230,230,.42)"><span>100</span></div>
<div class="cell d" style="left:391.40px;top:548px;width:34.05px;background:#c2ff00;border-right:1px solid rgba(225,225,225,.28);border-bottom:1px solid rgba(230,230,230,.42)"><span>107</span></div>
<div class="cell d" style="left:425.45px;top:548px;width:34.05px;background:#d7ff00;border-right:1px solid rgba(225,225,225,.28);border-bottom:1px solid rgba(230,230,230,.42)"><span>112</span></div>
<div class="cell d" style="left:459.50px;top:548px;width:34.05px;background:#ffff00;border-right:1px solid rgba(225,225,225,.28);border-bottom:1px solid rgba(230,230,230,.42)"><span>121</span></div>
<div class="cell d" style="left:493.55px;top:548px;width:34.05px;background:#ffff00;border-right:1px solid rgba(225,225,225,.28);border-bottom:1px solid rgba(230,230,230,.42)"><span>129</span></div>
<div class="cell d" style="left:527.60px;top:548px;width:34.05px;background:#ffff00;border-right:1px solid rgba(225,225,225,.28);border-bottom:1px solid rgba(230,230,230,.42)"><span>129</span></div>
<div class="cell d" style="left:561.65px;top:548px;width:34.05px;background:#ffff00;border-right:1px solid rgba(225,225,225,.28);border-bottom:1px solid rgba(230,230,230,.42)"><span>129</span></div>
<div class="cell d" style="left:595.70px;top:548px;width:34.05px;background:#ffff00;border-right:1px solid rgba(225,225,225,.28);border-bottom:1px solid rgba(230,230,230,.42)"><span>129</span></div>
<div class="cell d" style="left:629.75px;top:548px;width:34.05px;background:#ffff00;border-right:1px solid rgba(225,225,225,.28);border-bottom:1px solid rgba(230,230,230,.42)"><span>129</span></div>
<div class="cell d" style="left:663.80px;top:548px;width:34.05px;background:#ffff00;border-right:1px solid rgba(225,225,225,.28);border-bottom:1px solid rgba(230,230,230,.42)"><span>129</span></div>
<div class="cell d" style="left:697.85px;top:548px;width:34.05px;background:#ffff00;border-right:1px solid rgba(225,225,225,.28);border-bottom:1px solid rgba(230,230,230,.42)"><span>129</span></div>
<div class="cell rh" style="left:13px;top:564px;width:50px;background:#efede5;border-bottom:1.28px solid #1e1e1e;padding-right:2.8px"><span>245 kPa</span></div>
<div class="cell d" style="left:63.00px;top:564px;width:28.00px;background:#80ff00;border-right:1px solid rgba(225,225,225,.28);border-bottom:1px solid rgba(230,230,230,.42)"><span>55</span></div>
<div class="cell d" style="left:91.00px;top:564px;width:28.00px;background:#80ff00;border-right:1px solid rgba(225,225,225,.28);border-bottom:1px solid rgba(230,230,230,.42)"><span>65</span></div>
<div class="cell d" style="left:119.00px;top:564px;width:34.05px;background:#80ff00;border-right:1px solid rgba(225,225,225,.28);border-bottom:1px solid rgba(230,230,230,.42)"><span>75</span></div>
<div class="cell d" style="left:153.05px;top:564px;width:34.05px;background:#80ff00;border-right:1px solid rgba(225,225,225,.28);border-bottom:1px solid rgba(230,230,230,.42)"><span>84</span></div>
<div class="cell d" style="left:187.10px;top:564px;width:34.05px;background:#80ff00;border-right:1px solid rgba(225,225,225,.28);border-bottom:1px solid rgba(230,230,230,.42)"><span>89</span></div>
<div class="cell d" style="left:221.15px;top:564px;width:34.05px;background:#84ff00;border-right:1px solid rgba(225,225,225,.28);border-bottom:1px solid rgba(230,230,230,.42)"><span>91</span></div>
<div class="cell d" style="left:255.20px;top:564px;width:34.05px;background:#9aff00;border-right:1px solid rgba(225,225,225,.28);border-bottom:1px solid rgba(230,230,230,.42)"><span>96</span></div>
<div class="cell d" style="left:289.25px;top:564px;width:34.05px;background:#9aff00;border-right:1px solid rgba(225,225,225,.28);border-bottom:1px solid rgba(230,230,230,.42)"><span>96</span></div>
<div class="cell d" style="left:323.30px;top:564px;width:34.05px;background:#9eff00;border-right:1px solid rgba(225,225,225,.28);border-bottom:1px solid rgba(230,230,230,.42)"><span>98</span></div>
<div class="cell d" style="left:357.35px;top:564px;width:34.05px;background:#a2ff00;border-right:1px solid rgba(225,225,225,.28);border-bottom:1px solid rgba(230,230,230,.42)"><span>100</span></div>
<div class="cell d" style="left:391.40px;top:564px;width:34.05px;background:#c2ff00;border-right:1px solid rgba(225,225,225,.28);border-bottom:1px solid rgba(230,230,230,.42)"><span>107</span></div>
<div class="cell d" style="left:425.45px;top:564px;width:34.05px;background:#d7ff00;border-right:1px solid rgba(225,225,225,.28);border-bottom:1px solid rgba(230,230,230,.42)"><span>112</span></div>
<div class="cell d" style="left:459.50px;top:564px;width:34.05px;background:#ffff00;border-right:1px solid rgba(225,225,225,.28);border-bottom:1px solid rgba(230,230,230,.42)"><span>121</span></div>
<div class="cell d" style="left:493.55px;top:564px;width:34.05px;background:#ffff00;border-right:1px solid rgba(225,225,225,.28);border-bottom:1px solid rgba(230,230,230,.42)"><span>129</span></div>
<div class="cell d" style="left:527.60px;top:564px;width:34.05px;background:#ffff00;border-right:1px solid rgba(225,225,225,.28);border-bottom:1px solid rgba(230,230,230,.42)"><span>129</span></div>
<div class="cell d" style="left:561.65px;top:564px;width:34.05px;background:#ffff00;border-right:1px solid rgba(225,225,225,.28);border-bottom:1px solid rgba(230,230,230,.42)"><span>129</span></div>
<div class="cell d" style="left:595.70px;top:564px;width:34.05px;background:#ffff00;border-right:1px solid rgba(225,225,225,.28);border-bottom:1px solid rgba(230,230,230,.42)"><span>129</span></div>
<div class="cell d" style="left:629.75px;top:564px;width:34.05px;background:#ffff00;border-right:1px solid rgba(225,225,225,.28);border-bottom:1px solid rgba(230,230,230,.42)"><span>129</span></div>
<div class="cell d" style="left:663.80px;top:564px;width:34.05px;background:#ffff00;border-right:1px solid rgba(225,225,225,.28);border-bottom:1px solid rgba(230,230,230,.42)"><span>129</span></div>
<div class="cell d" style="left:697.85px;top:564px;width:34.05px;background:#ffff00;border-right:1px solid rgba(225,225,225,.28);border-bottom:1px solid rgba(230,230,230,.42)"><span>129</span></div>
<div class="cell rh" style="left:13px;top:580px;width:50px;background:#efede5;border-bottom:1.28px solid #1e1e1e;padding-right:2.8px"><span>255 kPa</span></div>
<div class="cell d" style="left:63.00px;top:580px;width:28.00px;background:#80ff00;border-right:1px solid rgba(225,225,225,.28);border-bottom:1px solid rgba(230,230,230,.42)"><span>55</span></div>
<div class="cell d" style="left:91.00px;top:580px;width:28.00px;background:#80ff00;border-right:1px solid rgba(225,225,225,.28);border-bottom:1px solid rgba(230,230,230,.42)"><span>65</span></div>
<div class="cell d" style="left:119.00px;top:580px;width:34.05px;background:#80ff00;border-right:1px solid rgba(225,225,225,.28);border-bottom:1px solid rgba(230,230,230,.42)"><span>75</span></div>
<div class="cell d" style="left:153.05px;top:580px;width:34.05px;background:#80ff00;border-right:1px solid rgba(225,225,225,.28);border-bottom:1px solid rgba(230,230,230,.42)"><span>84</span></div>
<div class="cell d" style="left:187.10px;top:580px;width:34.05px;background:#80ff00;border-right:1px solid rgba(225,225,225,.28);border-bottom:1px solid rgba(230,230,230,.42)"><span>89</span></div>
<div class="cell d" style="left:221.15px;top:580px;width:34.05px;background:#84ff00;border-right:1px solid rgba(225,225,225,.28);border-bottom:1px solid rgba(230,230,230,.42)"><span>91</span></div>
<div class="cell d" style="left:255.20px;top:580px;width:34.05px;background:#9aff00;border-right:1px solid rgba(225,225,225,.28);border-bottom:1px solid rgba(230,230,230,.42)"><span>96</span></div>
<div class="cell d" style="left:289.25px;top:580px;width:34.05px;background:#9aff00;border-right:1px solid rgba(225,225,225,.28);border-bottom:1px solid rgba(230,230,230,.42)"><span>96</span></div>
<div class="cell d" style="left:323.30px;top:580px;width:34.05px;background:#9eff00;border-right:1px solid rgba(225,225,225,.28);border-bottom:1px solid rgba(230,230,230,.42)"><span>98</span></div>
<div class="cell d" style="left:357.35px;top:580px;width:34.05px;background:#a2ff00;border-right:1px solid rgba(225,225,225,.28);border-bottom:1px solid rgba(230,230,230,.42)"><span>100</span></div>
<div class="cell d" style="left:391.40px;top:580px;width:34.05px;background:#c2ff00;border-right:1px solid rgba(225,225,225,.28);border-bottom:1px solid rgba(230,230,230,.42)"><span>107</span></div>
<div class="cell d" style="left:425.45px;top:580px;width:34.05px;background:#d7ff00;border-right:1px solid rgba(225,225,225,.28);border-bottom:1px solid rgba(230,230,230,.42)"><span>112</span></div>
<div class="cell d" style="left:459.50px;top:580px;width:34.05px;background:#ffff00;border-right:1px solid rgba(225,225,225,.28);border-bottom:1px solid rgba(230,230,230,.42)"><span>121</span></div>
<div class="cell d" style="left:493.55px;top:580px;width:34.05px;background:#ffff00;border-right:1px solid rgba(225,225,225,.28);border-bottom:1px solid rgba(230,230,230,.42)"><span>129</span></div>
<div class="cell d" style="left:527.60px;top:580px;width:34.05px;background:#ffff00;border-right:1px solid rgba(225,225,225,.28);border-bottom:1px solid rgba(230,230,230,.42)"><span>129</span></div>
<div class="cell d" style="left:561.65px;top:580px;width:34.05px;background:#ffff00;border-right:1px solid rgba(225,225,225,.28);border-bottom:1px solid rgba(230,230,230,.42)"><span>129</span></div>
<div class="cell d" style="left:595.70px;top:580px;width:34.05px;background:#ffff00;border-right:1px solid rgba(225,225,225,.28);border-bottom:1px solid rgba(230,230,230,.42)"><span>129</span></div>
<div class="cell d" style="left:629.75px;top:580px;width:34.05px;background:#ffff00;border-right:1px solid rgba(225,225,225,.28);border-bottom:1px solid rgba(230,230,230,.42)"><span>129</span></div>
<div class="cell d" style="left:663.80px;top:580px;width:34.05px;background:#ffff00;border-right:1px solid rgba(225,225,225,.28);border-bottom:1px solid rgba(230,230,230,.42)"><span>129</span></div>
<div class="cell d" style="left:697.85px;top:580px;width:34.05px;background:#ffff00;border-right:1px solid rgba(225,225,225,.28);border-bottom:1px solid rgba(230,230,230,.42)"><span>129</span></div>
<div class="cell rh" style="left:13px;top:596px;width:50px;background:#efede5;border-bottom:1.28px solid #1e1e1e;padding-right:2.8px"><span>265 kPa</span></div>
<div class="cell d" style="left:63.00px;top:596px;width:28.00px;background:#80ff00;border-right:1px solid rgba(225,225,225,.28);border-bottom:1px solid rgba(230,230,230,.42)"><span>55</span></div>
<div class="cell d" style="left:91.00px;top:596px;width:28.00px;background:#80ff00;border-right:1px solid rgba(225,225,225,.28);border-bottom:1px solid rgba(230,230,230,.42)"><span>65</span></div>
<div class="cell d" style="left:119.00px;top:596px;width:34.05px;background:#80ff00;border-right:1px solid rgba(225,225,225,.28);border-bottom:1px solid rgba(230,230,230,.42)"><span>75</span></div>
<div class="cell d" style="left:153.05px;top:596px;width:34.05px;background:#80ff00;border-right:1px solid rgba(225,225,225,.28);border-bottom:1px solid rgba(230,230,230,.42)"><span>84</span></div>
<div class="cell d" style="left:187.10px;top:596px;width:34.05px;background:#80ff00;border-right:1px solid rgba(225,225,225,.28);border-bottom:1px solid rgba(230,230,230,.42)"><span>89</span></div>
<div class="cell d" style="left:221.15px;top:596px;width:34.05px;background:#84ff00;border-right:1px solid rgba(225,225,225,.28);border-bottom:1px solid rgba(230,230,230,.42)"><span>91</span></div>
<div class="cell d" style="left:255.20px;top:596px;width:34.05px;background:#9aff00;border-right:1px solid rgba(225,225,225,.28);border-bottom:1px solid rgba(230,230,230,.42)"><span>96</span></div>
<div class="cell d" style="left:289.25px;top:596px;width:34.05px;background:#9aff00;border-right:1px solid rgba(225,225,225,.28);border-bottom:1px solid rgba(230,230,230,.42)"><span>96</span></div>
<div class="cell d" style="left:323.30px;top:596px;width:34.05px;background:#9eff00;border-right:1px solid rgba(225,225,225,.28);border-bottom:1px solid rgba(230,230,230,.42)"><span>98</span></div>
<div class="cell d" style="left:357.35px;top:596px;width:34.05px;background:#a2ff00;border-right:1px solid rgba(225,225,225,.28);border-bottom:1px solid rgba(230,230,230,.42)"><span>100</span></div>
<div class="cell d" style="left:391.40px;top:596px;width:34.05px;background:#c2ff00;border-right:1px solid rgba(225,225,225,.28);border-bottom:1px solid rgba(230,230,230,.42)"><span>107</span></div>
<div class="cell d" style="left:425.45px;top:596px;width:34.05px;background:#d7ff00;border-right:1px solid rgba(225,225,225,.28);border-bottom:1px solid rgba(230,230,230,.42)"><span>112</span></div>
<div class="cell d" style="left:459.50px;top:596px;width:34.05px;background:#ffff00;border-right:1px solid rgba(225,225,225,.28);border-bottom:1px solid rgba(230,230,230,.42)"><span>121</span></div>
<div class="cell d" style="left:493.55px;top:596px;width:34.05px;background:#ffff00;border-right:1px solid rgba(225,225,225,.28);border-bottom:1px solid rgba(230,230,230,.42)"><span>129</span></div>
<div class="cell d" style="left:527.60px;top:596px;width:34.05px;background:#ffff00;border-right:1px solid rgba(225,225,225,.28);border-bottom:1px solid rgba(230,230,230,.42)"><span>129</span></div>
<div class="cell d" style="left:561.65px;top:596px;width:34.05px;background:#ffff00;border-right:1px solid rgba(225,225,225,.28);border-bottom:1px solid rgba(230,230,230,.42)"><span>129</span></div>
<div class="cell d" style="left:595.70px;top:596px;width:34.05px;background:#ffff00;border-right:1px solid rgba(225,225,225,.28);border-bottom:1px solid rgba(230,230,230,.42)"><span>129</span></div>
<div class="cell d" style="left:629.75px;top:596px;width:34.05px;background:#ffff00;border-right:1px solid rgba(225,225,225,.28);border-bottom:1px solid rgba(230,230,230,.42)"><span>129</span></div>
<div class="cell d" style="left:663.80px;top:596px;width:34.05px;background:#ffff00;border-right:1px solid rgba(225,225,225,.28);border-bottom:1px solid rgba(230,230,230,.42)"><span>129</span></div>
<div class="cell d" style="left:697.85px;top:596px;width:34.05px;background:#ffff00;border-right:1px solid rgba(225,225,225,.28);border-bottom:1px solid rgba(230,230,230,.42)"><span>129</span></div>
<div class="cell rh" style="left:13px;top:612px;width:50px;background:#efede5;border-bottom:1.28px solid #1e1e1e;padding-right:2.8px"><span>275 kPa</span></div>
<div class="cell d" style="left:63.00px;top:612px;width:28.00px;background:#80ff00;border-right:1px solid rgba(225,225,225,.28);border-bottom:1px solid rgba(230,230,230,.42)"><span>55</span></div>
<div class="cell d" style="left:91.00px;top:612px;width:28.00px;background:#80ff00;border-right:1px solid rgba(225,225,225,.28);border-bottom:1px solid rgba(230,230,230,.42)"><span>65</span></div>
<div class="cell d" style="left:119.00px;top:612px;width:34.05px;background:#80ff00;border-right:1px solid rgba(225,225,225,.28);border-bottom:1px solid rgba(230,230,230,.42)"><span>75</span></div>
<div class="cell d" style="left:153.05px;top:612px;width:34.05px;background:#80ff00;border-right:1px solid rgba(225,225,225,.28);border-bottom:1px solid rgba(230,230,230,.42)"><span>84</span></div>
<div class="cell d" style="left:187.10px;top:612px;width:34.05px;background:#80ff00;border-right:1px solid rgba(225,225,225,.28);border-bottom:1px solid rgba(230,230,230,.42)"><span>89</span></div>
<div class="cell d" style="left:221.15px;top:612px;width:34.05px;background:#84ff00;border-right:1px solid rgba(225,225,225,.28);border-bottom:1px solid rgba(230,230,230,.42)"><span>91</span></div>
<div class="cell d" style="left:255.20px;top:612px;width:34.05px;background:#9aff00;border-right:1px solid rgba(225,225,225,.28);border-bottom:1px solid rgba(230,230,230,.42)"><span>96</span></div>
<div class="cell d" style="left:289.25px;top:612px;width:34.05px;background:#9aff00;border-right:1px solid rgba(225,225,225,.28);border-bottom:1px solid rgba(230,230,230,.42)"><span>96</span></div>
<div class="cell d" style="left:323.30px;top:612px;width:34.05px;background:#9eff00;border-right:1px solid rgba(225,225,225,.28);border-bottom:1px solid rgba(230,230,230,.42)"><span>98</span></div>
<div class="cell d" style="left:357.35px;top:612px;width:34.05px;background:#a2ff00;border-right:1px solid rgba(225,225,225,.28);border-bottom:1px solid rgba(230,230,230,.42)"><span>100</span></div>
<div class="cell d" style="left:391.40px;top:612px;width:34.05px;background:#c2ff00;border-right:1px solid rgba(225,225,225,.28);border-bottom:1px solid rgba(230,230,230,.42)"><span>107</span></div>
<div class="cell d" style="left:425.45px;top:612px;width:34.05px;background:#d7ff00;border-right:1px solid rgba(225,225,225,.28);border-bottom:1px solid rgba(230,230,230,.42)"><span>112</span></div>
<div class="cell d" style="left:459.50px;top:612px;width:34.05px;background:#ffff00;border-right:1px solid rgba(225,225,225,.28);border-bottom:1px solid rgba(230,230,230,.42)"><span>121</span></div>
<div class="cell d" style="left:493.55px;top:612px;width:34.05px;background:#ffff00;border-right:1px solid rgba(225,225,225,.28);border-bottom:1px solid rgba(230,230,230,.42)"><span>129</span></div>
<div class="cell d" style="left:527.60px;top:612px;width:34.05px;background:#ffff00;border-right:1px solid rgba(225,225,225,.28);border-bottom:1px solid rgba(230,230,230,.42)"><span>129</span></div>
<div class="cell d" style="left:561.65px;top:612px;width:34.05px;background:#ffff00;border-right:1px solid rgba(225,225,225,.28);border-bottom:1px solid rgba(230,230,230,.42)"><span>129</span></div>
<div class="cell d" style="left:595.70px;top:612px;width:34.05px;background:#ffff00;border-right:1px solid rgba(225,225,225,.28);border-bottom:1px solid rgba(230,230,230,.42)"><span>129</span></div>
<div class="cell d" style="left:629.75px;top:612px;width:34.05px;background:#ffff00;border-right:1px solid rgba(225,225,225,.28);border-bottom:1px solid rgba(230,230,230,.42)"><span>129</span></div>
<div class="cell d" style="left:663.80px;top:612px;width:34.05px;background:#ffff00;border-right:1px solid rgba(225,225,225,.28);border-bottom:1px solid rgba(230,230,230,.42)"><span>129</span></div>
<div class="cell d" style="left:697.85px;top:612px;width:34.05px;background:#ffff00;border-right:1px solid rgba(225,225,225,.28);border-bottom:1px solid rgba(230,230,230,.42)"><span>129</span></div>
<div class="cell rh" style="left:13px;top:628px;width:50px;background:#efede5;border-bottom:1.28px solid #1e1e1e;padding-right:2.8px"><span>285 kPa</span></div>
<div class="cell d" style="left:63.00px;top:628px;width:28.00px;background:#80ff00;border-right:1px solid rgba(225,225,225,.28);border-bottom:1px solid rgba(230,230,230,.42)"><span>55</span></div>
<div class="cell d" style="left:91.00px;top:628px;width:28.00px;background:#80ff00;border-right:1px solid rgba(225,225,225,.28);border-bottom:1px solid rgba(230,230,230,.42)"><span>65</span></div>
<div class="cell d" style="left:119.00px;top:628px;width:34.05px;background:#80ff00;border-right:1px solid rgba(225,225,225,.28);border-bottom:1px solid rgba(230,230,230,.42)"><span>75</span></div>
<div class="cell d" style="left:153.05px;top:628px;width:34.05px;background:#80ff00;border-right:1px solid rgba(225,225,225,.28);border-bottom:1px solid rgba(230,230,230,.42)"><span>84</span></div>
<div class="cell d" style="left:187.10px;top:628px;width:34.05px;background:#80ff00;border-right:1px solid rgba(225,225,225,.28);border-bottom:1px solid rgba(230,230,230,.42)"><span>89</span></div>
<div class="cell d" style="left:221.15px;top:628px;width:34.05px;background:#84ff00;border-right:1px solid rgba(225,225,225,.28);border-bottom:1px solid rgba(230,230,230,.42)"><span>91</span></div>
<div class="cell d" style="left:255.20px;top:628px;width:34.05px;background:#9aff00;border-right:1px solid rgba(225,225,225,.28);border-bottom:1px solid rgba(230,230,230,.42)"><span>96</span></div>
<div class="cell d" style="left:289.25px;top:628px;width:34.05px;background:#9aff00;border-right:1px solid rgba(225,225,225,.28);border-bottom:1px solid rgba(230,230,230,.42)"><span>96</span></div>
<div class="cell d" style="left:323.30px;top:628px;width:34.05px;background:#9eff00;border-right:1px solid rgba(225,225,225,.28);border-bottom:1px solid rgba(230,230,230,.42)"><span>98</span></div>
<div class="cell d" style="left:357.35px;top:628px;width:34.05px;background:#a2ff00;border-right:1px solid rgba(225,225,225,.28);border-bottom:1px solid rgba(230,230,230,.42)"><span>100</span></div>
<div class="cell d" style="left:391.40px;top:628px;width:34.05px;background:#c2ff00;border-right:1px solid rgba(225,225,225,.28);border-bottom:1px solid rgba(230,230,230,.42)"><span>107</span></div>
<div class="cell d" style="left:425.45px;top:628px;width:34.05px;background:#d7ff00;border-right:1px solid rgba(225,225,225,.28);border-bottom:1px solid rgba(230,230,230,.42)"><span>112</span></div>
<div class="cell d" style="left:459.50px;top:628px;width:34.05px;background:#ffff00;border-right:1px solid rgba(225,225,225,.28);border-bottom:1px solid rgba(230,230,230,.42)"><span>121</span></div>
<div class="cell d" style="left:493.55px;top:628px;width:34.05px;background:#ffff00;border-right:1px solid rgba(225,225,225,.28);border-bottom:1px solid rgba(230,230,230,.42)"><span>129</span></div>
<div class="cell d" style="left:527.60px;top:628px;width:34.05px;background:#ffff00;border-right:1px solid rgba(225,225,225,.28);border-bottom:1px solid rgba(230,230,230,.42)"><span>129</span></div>
<div class="cell d" style="left:561.65px;top:628px;width:34.05px;background:#ffff00;border-right:1px solid rgba(225,225,225,.28);border-bottom:1px solid rgba(230,230,230,.42)"><span>129</span></div>
<div class="cell d" style="left:595.70px;top:628px;width:34.05px;background:#ffff00;border-right:1px solid rgba(225,225,225,.28);border-bottom:1px solid rgba(230,230,230,.42)"><span>129</span></div>
<div class="cell d" style="left:629.75px;top:628px;width:34.05px;background:#ffff00;border-right:1px solid rgba(225,225,225,.28);border-bottom:1px solid rgba(230,230,230,.42)"><span>129</span></div>
<div class="cell d" style="left:663.80px;top:628px;width:34.05px;background:#ffff00;border-right:1px solid rgba(225,225,225,.28);border-bottom:1px solid rgba(230,230,230,.42)"><span>129</span></div>
<div class="cell d" style="left:697.85px;top:628px;width:34.05px;background:#ffff00;border-right:1px solid rgba(225,225,225,.28);border-bottom:1px solid rgba(230,230,230,.42)"><span>129</span></div>
<div class="cell rh" style="left:13px;top:644px;width:50px;background:#efede5;border-bottom:1.28px solid #1e1e1e;padding-right:2.8px"><span>295 kPa</span></div>
<div class="cell d" style="left:63.00px;top:644px;width:28.00px;background:#80ff00;border-right:1px solid rgba(225,225,225,.28);border-bottom:1px solid rgba(230,230,230,.42)"><span>55</span></div>
<div class="cell d" style="left:91.00px;top:644px;width:28.00px;background:#80ff00;border-right:1px solid rgba(225,225,225,.28);border-bottom:1px solid rgba(230,230,230,.42)"><span>65</span></div>
<div class="cell d" style="left:119.00px;top:644px;width:34.05px;background:#80ff00;border-right:1px solid rgba(225,225,225,.28);border-bottom:1px solid rgba(230,230,230,.42)"><span>75</span></div>
<div class="cell d" style="left:153.05px;top:644px;width:34.05px;background:#80ff00;border-right:1px solid rgba(225,225,225,.28);border-bottom:1px solid rgba(230,230,230,.42)"><span>84</span></div>
<div class="cell d" style="left:187.10px;top:644px;width:34.05px;background:#80ff00;border-right:1px solid rgba(225,225,225,.28);border-bottom:1px solid rgba(230,230,230,.42)"><span>89</span></div>
<div class="cell d" style="left:221.15px;top:644px;width:34.05px;background:#84ff00;border-right:1px solid rgba(225,225,225,.28);border-bottom:1px solid rgba(230,230,230,.42)"><span>91</span></div>
<div class="cell d" style="left:255.20px;top:644px;width:34.05px;background:#9aff00;border-right:1px solid rgba(225,225,225,.28);border-bottom:1px solid rgba(230,230,230,.42)"><span>96</span></div>
<div class="cell d" style="left:289.25px;top:644px;width:34.05px;background:#9aff00;border-right:1px solid rgba(225,225,225,.28);border-bottom:1px solid rgba(230,230,230,.42)"><span>96</span></div>
<div class="cell d" style="left:323.30px;top:644px;width:34.05px;background:#9eff00;border-right:1px solid rgba(225,225,225,.28);border-bottom:1px solid rgba(230,230,230,.42)"><span>98</span></div>
<div class="cell d" style="left:357.35px;top:644px;width:34.05px;background:#a2ff00;border-right:1px solid rgba(225,225,225,.28);border-bottom:1px solid rgba(230,230,230,.42)"><span>100</span></div>
<div class="cell d" style="left:391.40px;top:644px;width:34.05px;background:#c2ff00;border-right:1px solid rgba(225,225,225,.28);border-bottom:1px solid rgba(230,230,230,.42)"><span>107</span></div>
<div class="cell d" style="left:425.45px;top:644px;width:34.05px;background:#d7ff00;border-right:1px solid rgba(225,225,225,.28);border-bottom:1px solid rgba(230,230,230,.42)"><span>112</span></div>
<div class="cell d" style="left:459.50px;top:644px;width:34.05px;background:#ffff00;border-right:1px solid rgba(225,225,225,.28);border-bottom:1px solid rgba(230,230,230,.42)"><span>121</span></div>
<div class="cell d" style="left:493.55px;top:644px;width:34.05px;background:#ffff00;border-right:1px solid rgba(225,225,225,.28);border-bottom:1px solid rgba(230,230,230,.42)"><span>129</span></div>
<div class="cell d" style="left:527.60px;top:644px;width:34.05px;background:#ffff00;border-right:1px solid rgba(225,225,225,.28);border-bottom:1px solid rgba(230,230,230,.42)"><span>129</span></div>
<div class="cell d" style="left:561.65px;top:644px;width:34.05px;background:#ffff00;border-right:1px solid rgba(225,225,225,.28);border-bottom:1px solid rgba(230,230,230,.42)"><span>129</span></div>
<div class="cell d" style="left:595.70px;top:644px;width:34.05px;background:#ffff00;border-right:1px solid rgba(225,225,225,.28);border-bottom:1px solid rgba(230,230,230,.42)"><span>129</span></div>
<div class="cell d" style="left:629.75px;top:644px;width:34.05px;background:#ffff00;border-right:1px solid rgba(225,225,225,.28);border-bottom:1px solid rgba(230,230,230,.42)"><span>129</span></div>
<div class="cell d" style="left:663.80px;top:644px;width:34.05px;background:#ffff00;border-right:1px solid rgba(225,225,225,.28);border-bottom:1px solid rgba(230,230,230,.42)"><span>129</span></div>
<div class="cell d" style="left:697.85px;top:644px;width:34.05px;background:#ffff00;border-right:1px solid rgba(225,225,225,.28);border-bottom:1px solid rgba(230,230,230,.42)"><span>129</span></div>
<div class="cell rh" style="left:13px;top:660px;width:50px;background:#efede5;border-bottom:1.28px solid #1e1e1e;padding-right:2.8px"><span>305 kPa</span></div>
<div class="cell d" style="left:63.00px;top:660px;width:28.00px;background:#80ff00;border-right:1px solid rgba(225,225,225,.28);border-bottom:1px solid rgba(230,230,230,.42)"><span>55</span></div>
<div class="cell d" style="left:91.00px;top:660px;width:28.00px;background:#80ff00;border-right:1px solid rgba(225,225,225,.28);border-bottom:1px solid rgba(230,230,230,.42)"><span>65</span></div>
<div class="cell d" style="left:119.00px;top:660px;width:34.05px;background:#80ff00;border-right:1px solid rgba(225,225,225,.28);border-bottom:1px solid rgba(230,230,230,.42)"><span>75</span></div>
<div class="cell d" style="left:153.05px;top:660px;width:34.05px;background:#80ff00;border-right:1px solid rgba(225,225,225,.28);border-bottom:1px solid rgba(230,230,230,.42)"><span>84</span></div>
<div class="cell d" style="left:187.10px;top:660px;width:34.05px;background:#80ff00;border-right:1px solid rgba(225,225,225,.28);border-bottom:1px solid rgba(230,230,230,.42)"><span>89</span></div>
<div class="cell d" style="left:221.15px;top:660px;width:34.05px;background:#84ff00;border-right:1px solid rgba(225,225,225,.28);border-bottom:1px solid rgba(230,230,230,.42)"><span>91</span></div>
<div class="cell d" style="left:255.20px;top:660px;width:34.05px;background:#9aff00;border-right:1px solid rgba(225,225,225,.28);border-bottom:1px solid rgba(230,230,230,.42)"><span>96</span></div>
<div class="cell d" style="left:289.25px;top:660px;width:34.05px;background:#9aff00;border-right:1px solid rgba(225,225,225,.28);border-bottom:1px solid rgba(230,230,230,.42)"><span>96</span></div>
<div class="cell d" style="left:323.30px;top:660px;width:34.05px;background:#9eff00;border-right:1px solid rgba(225,225,225,.28);border-bottom:1px solid rgba(230,230,230,.42)"><span>98</span></div>
<div class="cell d" style="left:357.35px;top:660px;width:34.05px;background:#a2ff00;border-right:1px solid rgba(225,225,225,.28);border-bottom:1px solid rgba(230,230,230,.42)"><span>100</span></div>
<div class="cell d" style="left:391.40px;top:660px;width:34.05px;background:#c2ff00;border-right:1px solid rgba(225,225,225,.28);border-bottom:1px solid rgba(230,230,230,.42)"><span>107</span></div>
<div class="cell d" style="left:425.45px;top:660px;width:34.05px;background:#d7ff00;border-right:1px solid rgba(225,225,225,.28);border-bottom:1px solid rgba(230,230,230,.42)"><span>112</span></div>
<div class="cell d" style="left:459.50px;top:660px;width:34.05px;background:#ffff00;border-right:1px solid rgba(225,225,225,.28);border-bottom:1px solid rgba(230,230,230,.42)"><span>121</span></div>
<div class="cell d" style="left:493.55px;top:660px;width:34.05px;background:#ffff00;border-right:1px solid rgba(225,225,225,.28);border-bottom:1px solid rgba(230,230,230,.42)"><span>129</span></div>
<div class="cell d" style="left:527.60px;top:660px;width:34.05px;background:#ffff00;border-right:1px solid rgba(225,225,225,.28);border-bottom:1px solid rgba(230,230,230,.42)"><span>129</span></div>
<div class="cell d" style="left:561.65px;top:660px;width:34.05px;background:#ffff00;border-right:1px solid rgba(225,225,225,.28);border-bottom:1px solid rgba(230,230,230,.42)"><span>129</span></div>
<div class="cell d" style="left:595.70px;top:660px;width:34.05px;background:#ffff00;border-right:1px solid rgba(225,225,225,.28);border-bottom:1px solid rgba(230,230,230,.42)"><span>129</span></div>
<div class="cell d" style="left:629.75px;top:660px;width:34.05px;background:#ffff00;border-right:1px solid rgba(225,225,225,.28);border-bottom:1px solid rgba(230,230,230,.42)"><span>129</span></div>
<div class="cell d" style="left:663.80px;top:660px;width:34.05px;background:#ffff00;border-right:1px solid rgba(225,225,225,.28);border-bottom:1px solid rgba(230,230,230,.42)"><span>129</span></div>
<div class="cell d" style="left:697.85px;top:660px;width:34.05px;background:#ffff00;border-right:1px solid rgba(225,225,225,.28);border-bottom:1px solid rgba(230,230,230,.42)"><span>129</span></div>
<div class="cell rh" style="left:13px;top:676px;width:50px;background:#efede5;border-bottom:1.28px solid #1e1e1e;padding-right:2.8px"><span>315 kPa</span></div>
<div class="cell d" style="left:63.00px;top:676px;width:28.00px;background:#80ff00;border-right:1px solid rgba(225,225,225,.28);border-bottom:1px solid rgba(230,230,230,.42)"><span>55</span></div>
<div class="cell d" style="left:91.00px;top:676px;width:28.00px;background:#80ff00;border-right:1px solid rgba(225,225,225,.28);border-bottom:1px solid rgba(230,230,230,.42)"><span>65</span></div>
<div class="cell d" style="left:119.00px;top:676px;width:34.05px;background:#80ff00;border-right:1px solid rgba(225,225,225,.28);border-bottom:1px solid rgba(230,230,230,.42)"><span>75</span></div>
<div class="cell d" style="left:153.05px;top:676px;width:34.05px;background:#80ff00;border-right:1px solid rgba(225,225,225,.28);border-bottom:1px solid rgba(230,230,230,.42)"><span>84</span></div>
<div class="cell d" style="left:187.10px;top:676px;width:34.05px;background:#80ff00;border-right:1px solid rgba(225,225,225,.28);border-bottom:1px solid rgba(230,230,230,.42)"><span>89</span></div>
<div class="cell d" style="left:221.15px;top:676px;width:34.05px;background:#84ff00;border-right:1px solid rgba(225,225,225,.28);border-bottom:1px solid rgba(230,230,230,.42)"><span>91</span></div>
<div class="cell d" style="left:255.20px;top:676px;width:34.05px;background:#9aff00;border-right:1px solid rgba(225,225,225,.28);border-bottom:1px solid rgba(230,230,230,.42)"><span>96</span></div>
<div class="cell d" style="left:289.25px;top:676px;width:34.05px;background:#9aff00;border-right:1px solid rgba(225,225,225,.28);border-bottom:1px solid rgba(230,230,230,.42)"><span>96</span></div>
<div class="cell d" style="left:323.30px;top:676px;width:34.05px;background:#9eff00;border-right:1px solid rgba(225,225,225,.28);border-bottom:1px solid rgba(230,230,230,.42)"><span>98</span></div>
<div class="cell d" style="left:357.35px;top:676px;width:34.05px;background:#a2ff00;border-right:1px solid rgba(225,225,225,.28);border-bottom:1px solid rgba(230,230,230,.42)"><span>100</span></div>
<div class="cell d" style="left:391.40px;top:676px;width:34.05px;background:#c2ff00;border-right:1px solid rgba(225,225,225,.28);border-bottom:1px solid rgba(230,230,230,.42)"><span>107</span></div>
<div class="cell d" style="left:425.45px;top:676px;width:34.05px;background:#d7ff00;border-right:1px solid rgba(225,225,225,.28);border-bottom:1px solid rgba(230,230,230,.42)"><span>112</span></div>
<div class="cell d" style="left:459.50px;top:676px;width:34.05px;background:#ffff00;border-right:1px solid rgba(225,225,225,.28);border-bottom:1px solid rgba(230,230,230,.42)"><span>121</span></div>
<div class="cell d" style="left:493.55px;top:676px;width:34.05px;background:#ffff00;border-right:1px solid rgba(225,225,225,.28);border-bottom:1px solid rgba(230,230,230,.42)"><span>129</span></div>
<div class="cell d" style="left:527.60px;top:676px;width:34.05px;background:#ffff00;border-right:1px solid rgba(225,225,225,.28);border-bottom:1px solid rgba(230,230,230,.42)"><span>129</span></div>
<div class="cell d" style="left:561.65px;top:676px;width:34.05px;background:#ffff00;border-right:1px solid rgba(225,225,225,.28);border-bottom:1px solid rgba(230,230,230,.42)"><span>129</span></div>
<div class="cell d" style="left:595.70px;top:676px;width:34.05px;background:#ffff00;border-right:1px solid rgba(225,225,225,.28);border-bottom:1px solid rgba(230,230,230,.42)"><span>129</span></div>
<div class="cell d" style="left:629.75px;top:676px;width:34.05px;background:#ffff00;border-right:1px solid rgba(225,225,225,.28);border-bottom:1px solid rgba(230,230,230,.42)"><span>129</span></div>
<div class="cell d" style="left:663.80px;top:676px;width:34.05px;background:#ffff00;border-right:1px solid rgba(225,225,225,.28);border-bottom:1px solid rgba(230,230,230,.42)"><span>129</span></div>
<div class="cell d" style="left:697.85px;top:676px;width:34.05px;background:#ffff00;border-right:1px solid rgba(225,225,225,.28);border-bottom:1px solid rgba(230,230,230,.42)"><span>129</span></div>
<div class="a" style="left:730.90px;top:196px;width:1px;height:496px;background:#222"></div>
<div class="a" style="left:63px;top:691px;width:668.90px;height:1px;background:#222"></div>
<div class="a" style="left:996px;top:196px;width:17px;height:470px;background:linear-gradient(90deg,#fafaf7,#f3f2ec)"></div>
<div class="sb" style="left:996px;top:179px;width:17px;height:17px"><div class="a" style="left:5px;top:5.5px;width:0;height:0;border-left:4px solid transparent;border-right:4px solid transparent;border-bottom:4px solid #000"></div></div>
<div class="sb" style="left:996px;top:666px;width:17px;height:17px"></div>
<div class="sb" style="left:996px;top:683px;width:17px;height:17px"><div class="a" style="left:5px;top:6px;width:0;height:0;border-left:4px solid transparent;border-right:4px solid transparent;border-top:4px solid #000"></div></div>
<div class="a" style="left:0;top:705px;width:1024px;height:3px;background:linear-gradient(#4a8af0,#0a4ad8)"></div>
</div></body></html>
